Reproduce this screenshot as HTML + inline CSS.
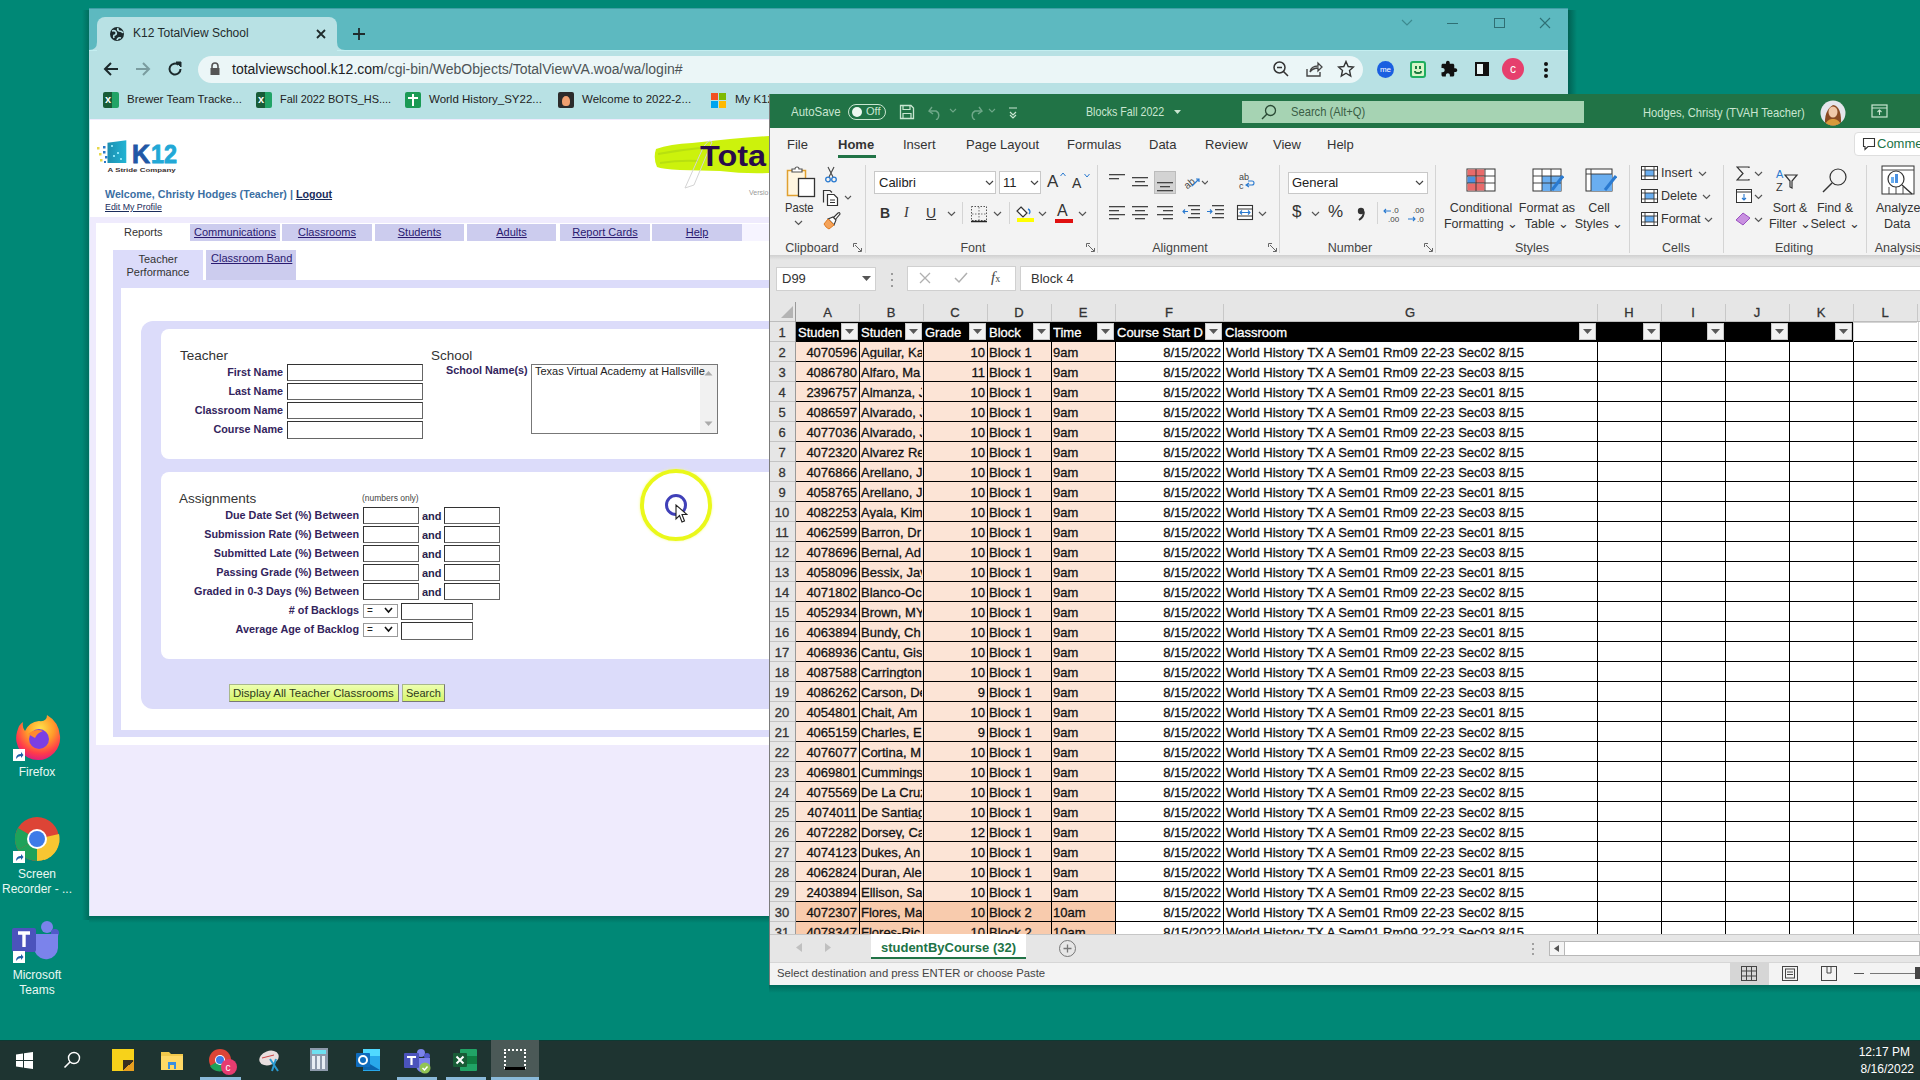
<!DOCTYPE html>
<html><head><meta charset="utf-8">
<style>
*{box-sizing:border-box;margin:0;padding:0}
html,body{width:1920px;height:1080px;overflow:hidden}
body{background:#008876;font-family:"Liberation Sans",sans-serif;position:relative}
.a{position:absolute}
.t{position:absolute;white-space:nowrap;line-height:1}
.g .t{-webkit-text-stroke:0.3px currentColor}
.lbl{font-size:10.8px;font-weight:bold;color:#33245c;text-align:right}
.inp{position:absolute;background:#fff;border:1px solid #666;border-top-color:#333;border-left-color:#333}
.navtab{position:absolute;height:17px;background:#ccccee;font-size:11px;color:#2a1a70;text-decoration:underline;text-align:center;line-height:17px}
.xl{width:16px;height:16px;background:linear-gradient(90deg,#185c37 0 55%,#21a366 55%);border-radius:2px}
.xl::after{content:"x";position:absolute;left:2px;top:1px;font:bold 11px "Liberation Sans";color:#fff}
</style></head><body>
<!-- desktop icons -->
<svg class="a" style="left:13px;top:712px" width="50" height="50" viewBox="0 0 50 50">
<defs><radialGradient id="ffg" cx="55%" cy="30%" r="70%"><stop offset="0" stop-color="#ffe14a"/><stop offset=".45" stop-color="#ff9a2a"/><stop offset=".8" stop-color="#ff3b4a"/><stop offset="1" stop-color="#e0207a"/></radialGradient></defs>
<path d="M25 48A22 22 0 0 1 4 20Q6 12 10 10Q9 16 12 19Q16 10 26 9Q34 10 34 3Q46 10 47 24A22 22 0 0 1 25 48Z" fill="url(#ffg)"/>
<circle cx="26" cy="27" r="10" fill="#7b3fe4"/><path d="M15 22Q22 16 30 19Q24 21 22 26Z" fill="#ff8a30"/>
</svg>
<div class="a" style="left:13px;top:749px;width:12px;height:12px;background:#fff"><svg class="a" style="left:1px;top:1px" width="10" height="10"><path d="M2 9Q2 4 7 4V2L9.5 5L7 8V6Q4 6 2 9Z" fill="#1b5fa8"/></svg></div>
<div class="t" style="left:0;width:74px;top:766px;text-align:center;font-size:12px;color:#eaf8f4">Firefox</div>

<svg class="a" style="left:14px;top:816px" width="46" height="46" viewBox="0 0 46 46">
<circle cx="23" cy="23" r="22" fill="#dd4436"/>
<path d="M23 23L4 34A22 22 0 0 1 4 12Z" fill="#1ea25a"/><path d="M23 23L4 34A22 22 0 0 0 32 43Z" fill="#1ea25a"/>
<path d="M23 23L45 23A22 22 0 0 1 23 45Z" fill="#f8c632"/><path d="M23 23L45 18A22 22 0 0 1 30 44Z" fill="#f8c632"/>
<circle cx="23" cy="23" r="10" fill="#fff"/><circle cx="23" cy="23" r="8" fill="#3d7be8"/>
</svg>
<div class="a" style="left:13px;top:851px;width:12px;height:12px;background:#fff"><svg class="a" style="left:1px;top:1px" width="10" height="10"><path d="M2 9Q2 4 7 4V2L9.5 5L7 8V6Q4 6 2 9Z" fill="#1b5fa8"/></svg></div>
<div class="t" style="left:0;width:74px;top:867px;text-align:center;font-size:12px;color:#eaf8f4;line-height:15px">Screen<br>Recorder - ...</div>

<svg class="a" style="left:11px;top:918px" width="50" height="44" viewBox="0 0 50 44">
<circle cx="36" cy="9" r="6" fill="#7b83eb"/><circle cx="44" cy="15" r="4" fill="#5059c9"/>
<path d="M18 16H47V30A12 12 0 0 1 24 34Z" fill="#7b83eb"/>
<rect x="1" y="10" width="24" height="24" rx="2" fill="#4b53bc"/>
<path d="M7 15H19M13 15V29" stroke="#fff" stroke-width="3.4"/>
</svg>
<div class="a" style="left:13px;top:951px;width:12px;height:12px;background:#fff"><svg class="a" style="left:1px;top:1px" width="10" height="10"><path d="M2 9Q2 4 7 4V2L9.5 5L7 8V6Q4 6 2 9Z" fill="#1b5fa8"/></svg></div>
<div class="t" style="left:0;width:74px;top:968px;text-align:center;font-size:12px;color:#eaf8f4;line-height:15px">Microsoft<br>Teams</div>

<!-- CHROME WINDOW -->
<div class="a" style="left:82px;top:10px;width:7px;height:910px;background:linear-gradient(270deg,rgba(0,50,40,.3),rgba(0,60,50,0))"></div>
<div class="a" style="left:1568px;top:10px;width:9px;height:910px;background:linear-gradient(90deg,rgba(0,50,40,.45),rgba(0,60,50,0))"></div>
<div class="a" style="left:89px;top:916px;width:680px;height:7px;background:linear-gradient(180deg,rgba(0,50,40,.35),rgba(0,60,50,0))"></div>
<div class="a" style="left:89px;top:8px;width:1479px;height:42px;background:#5db9c0"></div>
<div class="a" style="left:89px;top:8px;width:1479px;height:1px;background:#3f9ea5"></div>
<div class="a" style="left:97px;top:17px;width:240px;height:34px;background:#b8e1e4;border-radius:8px 8px 0 0"></div>
<svg class="a" style="left:89px;top:42px" width="8" height="8"><path d="M0 8H8V0Q8 8 0 8Z" fill="#b8e1e4"/></svg>
<svg class="a" style="left:337px;top:42px" width="8" height="8"><path d="M0 0V8H8Q0 8 0 0Z" fill="#b8e1e4"/></svg>
<!-- globe -->
<svg class="a" style="left:109px;top:26px" width="16" height="16" viewBox="0 0 16 16"><circle cx="8" cy="8" r="7" fill="#1c2a2c"/><path d="M3 5 q3 -1 4 1 q1 2 -1 3 q-2 0 -1 3 M9 2 q-1 2 1 3 q3 0 4 2 M8 14 q1-3 4-2" stroke="#b8e1e4" stroke-width="1.6" fill="none"/></svg>
<div class="t" style="left:133px;top:27px;font-size:12px;color:#1f2b2c">K12 TotalView School</div>
<svg class="a" style="left:315px;top:28px" width="12" height="12" viewBox="0 0 12 12"><path d="M2 2L10 10M10 2L2 10" stroke="#1f2b2c" stroke-width="1.8"/></svg>
<svg class="a" style="left:352px;top:27px" width="14" height="14" viewBox="0 0 14 14"><path d="M7 1V13M1 7H13" stroke="#1f2b2c" stroke-width="1.8"/></svg>
<!-- window controls -->
<svg class="a" style="left:1400px;top:17px" width="14" height="12" viewBox="0 0 14 12"><path d="M2 3L7 8L12 3" stroke="#3d8a8f" stroke-width="1.2" fill="none"/></svg>
<div class="a" style="left:1447px;top:23px;width:11px;height:1px;background:#2f6f74"></div>
<div class="a" style="left:1494px;top:18px;width:11px;height:10px;border:1px solid #2f6f74"></div>
<svg class="a" style="left:1539px;top:17px" width="12" height="12" viewBox="0 0 12 12"><path d="M1 1L11 11M11 1L1 11" stroke="#2f6f74" stroke-width="1.1"/></svg>
<!-- toolbar -->
<div class="a" style="left:89px;top:50px;width:1479px;height:69px;background:#b8e1e4;border-top:1px solid #c4eef0"></div>
<div class="a" style="left:97px;top:49px;width:240px;height:3px;background:#b8e1e4"></div>
<svg class="a" style="left:102px;top:61px" width="18" height="16" viewBox="0 0 18 16"><path d="M16 8H3M9 2L3 8L9 14" stroke="#1c2a2c" stroke-width="2" fill="none"/></svg>
<svg class="a" style="left:134px;top:61px" width="18" height="16" viewBox="0 0 18 16"><path d="M2 8H15M9 2L15 8L9 14" stroke="#7a9c9f" stroke-width="2" fill="none"/></svg>
<svg class="a" style="left:166px;top:60px" width="18" height="18" viewBox="0 0 18 18"><path d="M14.5 9A5.5 5.5 0 1 1 12.5 4.8" stroke="#1c2a2c" stroke-width="2" fill="none"/><path d="M10 2H15V7Z" fill="#1c2a2c" stroke="#1c2a2c" stroke-width="1"/></svg>
<div class="a" style="left:198px;top:56px;width:1165px;height:27px;background:#ebf6f7;border-radius:14px"></div>
<svg class="a" style="left:209px;top:62px" width="12" height="14" viewBox="0 0 12 14"><path d="M3 6V4a3 3 0 0 1 6 0V6" stroke="#555" stroke-width="1.6" fill="none"/><rect x="1.5" y="6" width="9" height="7" fill="#555"/></svg>
<div class="t" style="left:232px;top:62px;font-size:14px;color:#202124">totalviewschool.k12.com<span style="color:#4d5456">/cgi-bin/WebObjects/TotalViewVA.woa/wa/login#</span></div>
<svg class="a" style="left:1272px;top:60px" width="18" height="18" viewBox="0 0 18 18"><circle cx="7.5" cy="7.5" r="5.5" stroke="#333" stroke-width="1.5" fill="none"/><path d="M5 7.5H10M11.5 11.5L16 16" stroke="#333" stroke-width="1.5"/></svg>
<svg class="a" style="left:1305px;top:60px" width="18" height="18" viewBox="0 0 18 18"><path d="M2 9V16H15V12" stroke="#444" stroke-width="1.4" fill="none"/><path d="M5 12q1-6 8-6V3l4 4-4 4V8q-5 0-8 4" stroke="#444" stroke-width="1.3" fill="none"/></svg>
<svg class="a" style="left:1337px;top:60px" width="18" height="18" viewBox="0 0 18 18"><path d="M9 1.5L11.2 6.5L16.5 7L12.5 10.5L13.7 16L9 13.2L4.3 16L5.5 10.5L1.5 7L6.8 6.5Z" stroke="#333" stroke-width="1.4" fill="none"/></svg>
<div class="a" style="left:1377px;top:61px;width:17px;height:17px;border-radius:50%;background:#1a5fe0;color:#fff;font-size:8px;line-height:17px;text-align:center">me</div>
<div class="a" style="left:1410px;top:61px;width:16px;height:17px;border:2px solid #1fae5f;border-radius:3px;background:#d8f5c8"><div class="a" style="left:3px;top:3px;width:2px;height:3px;background:#1b7a40"></div><div class="a" style="left:7px;top:3px;width:2px;height:3px;background:#1b7a40"></div><div class="a" style="left:2px;top:8px;width:8px;height:3px;border:2px solid #1b7a40;border-top:none;border-radius:0 0 4px 4px"></div></div>
<svg class="a" style="left:1440px;top:60px" width="18" height="18" viewBox="0 0 24 24"><path d="M20.5 11H19V7c0-1.1-.9-2-2-2h-4V3.5C13 2.12 11.88 1 10.5 1S8 2.12 8 3.5V5H4c-1.1 0-1.99.9-1.99 2v3.8H3.5c1.49 0 2.7 1.21 2.7 2.7s-1.21 2.7-2.7 2.7H2V20c0 1.1.9 2 2 2h3.8v-1.5c0-1.49 1.21-2.7 2.7-2.7 1.49 0 2.7 1.21 2.7 2.7V22H17c1.1 0 2-.9 2-2v-4h1.5c1.380 0 2.5-1.12 2.5-2.5S21.88 11 20.5 11z" fill="#111"/></svg>
<div class="a" style="left:1475px;top:62px;width:14px;height:14px;border:2px solid #111;background:linear-gradient(90deg,#e8f4f4 0 55%,#111 55%)"></div>
<div class="a" style="left:1502px;top:58px;width:22px;height:22px;border-radius:50%;background:#e63f6d;color:#fff;font-size:12px;line-height:22px;text-align:center">c</div>
<div class="a" style="left:1544px;top:62px;width:4px;height:4px;border-radius:50%;background:#111"></div>
<div class="a" style="left:1544px;top:68px;width:4px;height:4px;border-radius:50%;background:#111"></div>
<div class="a" style="left:1544px;top:74px;width:4px;height:4px;border-radius:50%;background:#111"></div>
<!-- bookmarks -->
<div class="a xl" style="left:103px;top:92px"></div>
<div class="t" style="left:127px;top:94px;font-size:11.5px;color:#222">Brewer Team Tracke...</div>
<div class="a xl" style="left:256px;top:92px"></div>
<div class="t" style="left:280px;top:94px;font-size:11.5px;color:#222;transform:scaleX(0.95);transform-origin:0 0">Fall 2022 BOTS_HS....</div>
<div class="a" style="left:405px;top:92px;width:16px;height:16px;background:#1a9a55;border-radius:2px"><div class="a" style="left:7px;top:2px;width:2px;height:12px;background:#fff"></div><div class="a" style="left:3px;top:5px;width:10px;height:2px;background:#fff"></div></div>
<div class="t" style="left:429px;top:94px;font-size:11.5px;color:#222">World History_SY22...</div>
<div class="a" style="left:558px;top:92px;width:16px;height:16px;background:#2b2b2b;border-radius:2px"><div class="a" style="left:4px;top:4px;width:8px;height:10px;background:#f0a070;border-radius:50% 50% 40% 40%"></div></div>
<div class="t" style="left:582px;top:94px;font-size:11.5px;color:#222">Welcome to 2022-2...</div>
<div class="a" style="left:711px;top:93px;width:7px;height:7px;background:#f25022"></div><div class="a" style="left:719px;top:93px;width:7px;height:7px;background:#7fba00"></div><div class="a" style="left:711px;top:101px;width:7px;height:7px;background:#00a4ef"></div><div class="a" style="left:719px;top:101px;width:7px;height:7px;background:#ffb900"></div>
<div class="t" style="left:735px;top:94px;font-size:11.5px;color:#222">My K12</div>

<!-- WEB PAGE -->
<div class="a" style="left:89px;top:119px;width:1479px;height:797px;background:#efebfd;border-left:1px solid #bfeaee"></div>
<div class="a" style="left:90px;top:120px;width:1478px;height:97px;background:#fff"></div>
<div class="a" style="left:96px;top:223px;width:1472px;height:522px;background:#fff"></div>

<!-- K12 logo -->
<svg class="a" style="left:96px;top:137px" width="84" height="38" viewBox="0 0 84 38">
<defs><linearGradient id="k12b" x1="0" x2="1"><stop offset="0" stop-color="#1c8fb0"/><stop offset="1" stop-color="#22b4d4"/></linearGradient></defs>
<g fill="#e8d84a"><rect x="1" y="10" width="2.5" height="2.5"/><rect x="3" y="16" width="2.5" height="2.5"/><rect x="4" y="22" width="2.5" height="2.5"/></g>
<g fill="#2a7ac8"><rect x="7" y="9" width="2.5" height="2.5"/><rect x="7" y="14" width="2.5" height="2.5"/><rect x="9" y="19" width="2.5" height="2.5"/><rect x="8" y="24" width="2" height="2"/></g>
<path d="M11.5 5.8L30.3 3.2V26H11.5Z" fill="url(#k12b)"/>
<g fill="#9ff0ff" opacity=".85"><rect x="15" y="8" width="2" height="2"/><rect x="21" y="15" width="2" height="2"/><rect x="17" y="18" width="2" height="2"/><rect x="24" y="21" width="2" height="2"/></g>
<text x="36" y="26" font-family="Liberation Sans" font-weight="bold" font-size="26.5" fill="#1f58a6" stroke="#1f58a6" stroke-width="0.9" textLength="18" lengthAdjust="spacingAndGlyphs">K</text>
<text x="55" y="26" font-family="Liberation Sans" font-weight="bold" font-size="26.5" fill="#22a8d6" stroke="#22a8d6" stroke-width="0.9" textLength="26" lengthAdjust="spacingAndGlyphs">12</text>
<text x="11.6" y="34.5" font-family="Liberation Sans" font-weight="bold" font-size="6" fill="#3a2e2e" textLength="68" lengthAdjust="spacingAndGlyphs">A Stride Company</text>
</svg>
<div class="t" style="left:105px;top:189px;font-size:10.7px;font-weight:bold;color:#3b6fa3">Welcome, Christy Hodges (Teacher) | <span style="color:#1b2d5c;text-decoration:underline">Logout</span></div>
<div class="t" style="left:105px;top:202px;font-size:9.8px;color:#1b2d5c;text-decoration:underline;transform:scaleX(0.9);transform-origin:0 0">Edit My Profile</div>
<!-- TotalView logo -->
<svg class="a" style="left:650px;top:130px" width="120" height="70" viewBox="0 0 120 70">
<path d="M6 19 Q20 14 42 13 L80 9 Q100 7 119 6 L119 43 Q95 44 70 41 L30 40 Q12 39 7 37 Q3 28 6 19Z" fill="#ccf20c"/>
<path d="M8 24Q30 20 50 18M10 33Q30 30 48 31" stroke="#b8e010" stroke-width="2" fill="none"/>
<path d="M35 58 L52 20 Q58 8 62 12 L44 55 Z" stroke="#d4d4d4" stroke-width="1" fill="none"/>
<text x="50" y="36" font-family="Liberation Sans" font-weight="bold" font-size="29" fill="#2a0b4a" textLength="66" lengthAdjust="spacingAndGlyphs">Tota</text>
<text x="99" y="65" font-family="Liberation Sans" font-size="7" fill="#999">Versio</text>
</svg>
<!-- nav tabs -->
<div class="t" style="left:124px;top:227px;font-size:11px;color:#333">Reports</div>
<div class="navtab" style="left:190px;width:90px;top:224px">Communications</div>
<div class="navtab" style="left:282px;width:90px;top:224px">Classrooms</div>
<div class="navtab" style="left:375px;width:89px;top:224px">Students</div>
<div class="navtab" style="left:467px;width:89px;top:224px">Adults</div>
<div class="navtab" style="left:560px;width:90px;top:224px">Report Cards</div>
<div class="navtab" style="left:652px;width:90px;top:224px">Help</div>
<div class="a" style="left:742px;top:224px;width:30px;height:17px;background:#f6f4ff"></div>
<!-- sub tabs -->
<div class="a" style="left:113px;top:250px;width:90px;height:31px;background:#dcdcfa"></div>
<div class="t" style="left:113px;width:90px;top:253px;font-size:11px;color:#333;text-align:center;line-height:13px">Teacher<br>Performance</div>
<div class="a" style="left:206px;top:250px;width:90px;height:31px;background:#ccccee"></div>
<div class="t" style="left:211px;top:253px;font-size:11px;color:#2a1a70;text-decoration:underline">Classroom Band</div>
<!-- frame -->
<div class="a" style="left:113px;top:280px;width:1455px;height:457px;background:#dcdcfa"></div>
<div class="a" style="left:121px;top:288px;width:1447px;height:442px;background:#fff"></div>
<div class="a" style="left:141px;top:321px;width:1427px;height:388px;background:#dcdcfa;border-radius:12px 0 0 12px"></div>
<div class="a" style="left:161px;top:329px;width:1407px;height:130px;background:#fff;border-radius:8px 0 0 8px"></div>
<div class="a" style="left:161px;top:472px;width:1407px;height:187px;background:#fff;border-radius:8px 0 0 8px"></div>
<!-- teacher panel -->
<div class="t" style="left:180px;top:349px;font-size:13.5px;color:#333">Teacher</div>
<div class="t lbl" style="left:120px;width:163px;top:367px">First Name</div>
<div class="t lbl" style="left:120px;width:163px;top:386px">Last Name</div>
<div class="t lbl" style="left:120px;width:163px;top:405px">Classroom Name</div>
<div class="t lbl" style="left:120px;width:163px;top:424px">Course Name</div>
<div class="inp" style="left:287px;top:364px;width:136px;height:17px"></div>
<div class="inp" style="left:287px;top:383px;width:136px;height:17px"></div>
<div class="inp" style="left:287px;top:402px;width:136px;height:17px"></div>
<div class="inp" style="left:287px;top:421px;width:136px;height:18px"></div>
<div class="t" style="left:431px;top:349px;font-size:13.5px;color:#333">School</div>
<div class="t lbl" style="left:446px;top:365px">School Name(s)</div>
<div class="inp" style="left:531px;top:364px;width:187px;height:70px;border-color:#777"></div>
<div class="a" style="left:700px;top:365px;width:17px;height:68px;background:#f1f1f1"></div>
<svg class="a" style="left:704px;top:370px" width="9" height="6"><path d="M0.5 5.5L4.5 1L8.5 5.5Z" fill="#aaa"/></svg>
<svg class="a" style="left:704px;top:421px" width="9" height="6"><path d="M0.5 0.5L4.5 5L8.5 0.5Z" fill="#aaa"/></svg>
<div class="t" style="left:535px;top:366px;font-size:11px;color:#222">Texas Virtual Academy at Hallsville</div>
<!-- assignments -->
<div class="t" style="left:179px;top:492px;font-size:13.5px;color:#333">Assignments</div>
<div class="t" style="left:362px;top:494px;font-size:8.5px;color:#444">(numbers only)</div>
<div class="t lbl" style="left:100px;width:259px;top:510px">Due Date Set (%) Between</div>
<div class="t lbl" style="left:100px;width:259px;top:529px">Submission Rate (%) Between</div>
<div class="t lbl" style="left:100px;width:259px;top:548px">Submitted Late (%) Between</div>
<div class="t lbl" style="left:100px;width:259px;top:567px">Passing Grade (%) Between</div>
<div class="t lbl" style="left:100px;width:259px;top:586px">Graded in 0-3 Days (%) Between</div>
<div class="t lbl" style="left:100px;width:259px;top:605px">&#35; of Backlogs</div>
<div class="t lbl" style="left:100px;width:259px;top:624px">Average Age of Backlog</div>
<div class="inp" style="left:363px;top:507px;width:56px;height:17px"></div>
<div class="inp" style="left:363px;top:526px;width:56px;height:17px"></div>
<div class="inp" style="left:363px;top:545px;width:56px;height:17px"></div>
<div class="inp" style="left:363px;top:564px;width:56px;height:17px"></div>
<div class="inp" style="left:363px;top:583px;width:56px;height:17px"></div>
<div class="inp" style="left:444px;top:507px;width:56px;height:17px"></div>
<div class="inp" style="left:444px;top:526px;width:56px;height:17px"></div>
<div class="inp" style="left:444px;top:545px;width:56px;height:17px"></div>
<div class="inp" style="left:444px;top:564px;width:56px;height:17px"></div>
<div class="inp" style="left:444px;top:583px;width:56px;height:17px"></div>
<div class="t" style="left:422px;top:511px;font-size:11px;font-weight:bold;color:#2b1f4d">and</div>
<div class="t" style="left:422px;top:530px;font-size:11px;font-weight:bold;color:#2b1f4d">and</div>
<div class="t" style="left:422px;top:549px;font-size:11px;font-weight:bold;color:#2b1f4d">and</div>
<div class="t" style="left:422px;top:568px;font-size:11px;font-weight:bold;color:#2b1f4d">and</div>
<div class="t" style="left:422px;top:587px;font-size:11px;font-weight:bold;color:#2b1f4d">and</div>
<div class="inp" style="left:363px;top:604px;width:35px;height:14px;border-color:#999"></div>
<div class="inp" style="left:363px;top:623px;width:35px;height:14px;border-color:#999"></div>
<div class="t" style="left:367px;top:606px;font-size:10px;color:#222">=</div>
<div class="t" style="left:367px;top:625px;font-size:10px;color:#222">=</div>
<svg class="a" style="left:384px;top:607px" width="9" height="7"><path d="M1 1L4.5 5L8 1" stroke="#111" stroke-width="1.6" fill="none"/></svg>
<svg class="a" style="left:384px;top:626px" width="9" height="7"><path d="M1 1L4.5 5L8 1" stroke="#111" stroke-width="1.6" fill="none"/></svg>
<div class="inp" style="left:401px;top:603px;width:72px;height:17px"></div>
<div class="inp" style="left:401px;top:622px;width:72px;height:18px"></div>
<!-- buttons -->
<div class="a" style="left:229px;top:684px;width:170px;height:18px;background:linear-gradient(#edffb0,#d6f56a);border:1px solid #a8b88a;border-right-color:#777;border-bottom-color:#777"></div>
<div class="t" style="left:233px;top:688px;font-size:11.5px;color:#2d3a1a">Display All Teacher Classrooms</div>
<div class="a" style="left:402px;top:684px;width:43px;height:18px;background:linear-gradient(#edffb0,#d6f56a);border:1px solid #a8b88a;border-right-color:#777;border-bottom-color:#777"></div>
<div class="t" style="left:406px;top:688px;font-size:11px;color:#2d3a1a">Search</div>
<!-- cursor highlight -->
<div class="a" style="left:640px;top:469px;width:72px;height:72px;border-radius:50%;border:4px solid #eaf81a;box-shadow:0 0 3px #f4fa90"></div>
<div class="a" style="left:665px;top:494px;width:22px;height:22px;border-radius:50%;border:3px solid #4040b8"></div>
<svg class="a" style="left:675px;top:504px" width="13" height="20" viewBox="0 0 13 20"><path d="M1 1V15L4.5 11.5L7 18L9.5 17L7 10.5H12Z" fill="#fff" stroke="#222" stroke-width="1.1"/></svg>

<div class="a" style="left:769px;top:94px;width:1151px;height:891px;overflow:hidden;background:#f3f3f3">
<div class="a" style="left:0px;top:0px;width:1151px;height:34px;background:#217346"></div>
<div class="t" style="left:22px;top:11px;font-size:13px;color:#c9e6d1;transform:scaleX(0.88);transform-origin:0 0">AutoSave</div>
<div class="a" style="left:79px;top:10px;width:38px;height:16px;border:1.5px solid #c9e6d1;border-radius:8px"></div>
<div class="a" style="left:83px;top:13px;width:10px;height:10px;background:#eef8f1;border-radius:50%"></div>
<div class="t" style="left:97px;top:12px;font-size:11px;color:#c9e6d1">Off</div>
<svg class="a" style="left:130px;top:10px" width="16" height="16" viewBox="0 0 16 16"><path d="M1.5 1.5H12L14.5 4V14.5H1.5Z" stroke="#c9e6d1" stroke-width="1.3" fill="none"/><path d="M4 1.5V5.5H11V1.5M4 14.5V9.5H12V14.5" stroke="#c9e6d1" stroke-width="1.2" fill="none"/></svg>
<svg class="a" style="left:158px;top:10px" width="18" height="16" viewBox="0 0 18 16"><path d="M5 3L2 7L6 10" stroke="#6fa889" stroke-width="1.4" fill="none"/><path d="M2.5 7H9a5 5 0 0 1 0 9" stroke="#6fa889" stroke-width="1.4" fill="none"/></svg>
<svg class="a" style="left:180px;top:14px" width="8" height="6" viewBox="0 0 8 6"><path d="M1 1L4 4L7 1" stroke="#6fa889" stroke-width="1.1" fill="none"/></svg>
<svg class="a" style="left:197px;top:10px" width="18" height="16" viewBox="0 0 18 16"><path d="M13 3L16 7L12 10" stroke="#6fa889" stroke-width="1.4" fill="none"/><path d="M15.5 7H9a5 5 0 0 0 0 9" stroke="#6fa889" stroke-width="1.4" fill="none"/></svg>
<svg class="a" style="left:219px;top:14px" width="8" height="6" viewBox="0 0 8 6"><path d="M1 1L4 4L7 1" stroke="#6fa889" stroke-width="1.1" fill="none"/></svg>
<svg class="a" style="left:238px;top:11px" width="12" height="14" viewBox="0 0 12 14"><path d="M2 3H10M3 7L6 10L9 7M3 10L6 13L9 10" stroke="#c9e6d1" stroke-width="1.2" fill="none"/></svg>
<div class="t" style="left:317px;top:11px;font-size:13px;color:#c9e6d1;transform:scaleX(0.82);transform-origin:0 0">Blocks Fall 2022</div>
<svg class="a" style="left:405px;top:16px" width="7" height="4" viewBox="0 0 7 4"><path d="M0 0H7L3.5 4Z" fill="#c9e6d1"/></svg>
<div class="a" style="left:473px;top:7px;width:342px;height:22px;background:#a6d3b3"></div>
<svg class="a" style="left:491px;top:9px" width="18" height="18" viewBox="0 0 18 18"><circle cx="10.5" cy="7.5" r="5" stroke="#2a4a35" stroke-width="1.3" fill="none"/><path d="M7 11L2 16" stroke="#2a4a35" stroke-width="1.5"/></svg>
<div class="t" style="left:522px;top:11px;font-size:13px;color:#3a5e45;transform:scaleX(0.86);transform-origin:0 0">Search (Alt+Q)</div>
<div class="t" style="left:874px;top:12px;font-size:13px;color:#c9e6d1;transform:scaleX(0.86);transform-origin:0 0">Hodges, Christy (TVAH Teacher)</div>
<svg class="a" style="left:1051px;top:6px" width="26" height="26" viewBox="0 0 26 26"><defs><clipPath id="avc"><circle cx="13" cy="13" r="12.5"/></clipPath></defs><g clip-path="url(#avc)"><rect width="26" height="26" fill="#e4e6ec"/><path d="M5 26Q4 10 13 5Q22 6 21 26Z" fill="#8a4a22"/><ellipse cx="13" cy="12" rx="4.5" ry="5.5" fill="#f0c8a8"/><path d="M4 26Q8 18 13 19Q18 18 22 26Z" fill="#d89a3a"/></g></svg>
<svg class="a" style="left:1102px;top:10px" width="17" height="14" viewBox="0 0 17 14"><rect x="1" y="1" width="15" height="12" stroke="#c9e6d1" stroke-width="1.2" fill="none"/><path d="M1 4H16M8.5 6V11M6.5 8L8.5 6L10.5 8" stroke="#c9e6d1" stroke-width="1.1" fill="none"/></svg>
<div class="a" style="left:0px;top:34px;width:1151px;height:127px;background:#f3f3f3"></div>
<div class="t" style="left:18px;top:44px;font-size:13px;color:#333">File</div>
<div class="t" style="left:69px;top:44px;font-size:13px;color:#333;font-weight:bold">Home</div>
<div class="t" style="left:134px;top:44px;font-size:13px;color:#333">Insert</div>
<div class="t" style="left:197px;top:44px;font-size:13px;color:#333">Page Layout</div>
<div class="t" style="left:298px;top:44px;font-size:13px;color:#333">Formulas</div>
<div class="t" style="left:380px;top:44px;font-size:13px;color:#333">Data</div>
<div class="t" style="left:436px;top:44px;font-size:13px;color:#333">Review</div>
<div class="t" style="left:504px;top:44px;font-size:13px;color:#333">View</div>
<div class="t" style="left:558px;top:44px;font-size:13px;color:#333">Help</div>
<div class="a" style="left:69px;top:61px;width:38px;height:3px;background:#217346"></div>
<div class="a" style="left:1085px;top:38px;width:70px;height:24px;background:#fff;border:1px solid #dedede;border-radius:4px"></div>
<svg class="a" style="left:1093px;top:43px" width="14" height="14" viewBox="0 0 14 14"><path d="M1.5 1.5H12.5V9.5H6L3 12.5V9.5H1.5Z" stroke="#333" stroke-width="1.1" fill="none"/></svg>
<div class="t" style="left:1108px;top:43px;font-size:13px;color:#217346">Comments</div>
<div class="a" style="left:96px;top:71px;width:1px;height:88px;background:#d4d4d4"></div>
<div class="a" style="left:328px;top:71px;width:1px;height:88px;background:#d4d4d4"></div>
<div class="a" style="left:510px;top:71px;width:1px;height:88px;background:#d4d4d4"></div>
<div class="a" style="left:666px;top:71px;width:1px;height:88px;background:#d4d4d4"></div>
<div class="a" style="left:860px;top:71px;width:1px;height:88px;background:#d4d4d4"></div>
<div class="a" style="left:954px;top:71px;width:1px;height:88px;background:#d4d4d4"></div>
<div class="a" style="left:1097px;top:71px;width:1px;height:88px;background:#d4d4d4"></div>
<div class="t" style="left:-17px;top:148px;width:120px;text-align:center;font-size:12.5px;color:#444">Clipboard</div>
<div class="t" style="left:144px;top:148px;width:120px;text-align:center;font-size:12.5px;color:#444">Font</div>
<div class="t" style="left:351px;top:148px;width:120px;text-align:center;font-size:12.5px;color:#444">Alignment</div>
<div class="t" style="left:521px;top:148px;width:120px;text-align:center;font-size:12.5px;color:#444">Number</div>
<div class="t" style="left:703px;top:148px;width:120px;text-align:center;font-size:12.5px;color:#444">Styles</div>
<div class="t" style="left:847px;top:148px;width:120px;text-align:center;font-size:12.5px;color:#444">Cells</div>
<div class="t" style="left:965px;top:148px;width:120px;text-align:center;font-size:12.5px;color:#444">Editing</div>
<div class="t" style="left:1069px;top:148px;width:120px;text-align:center;font-size:12.5px;color:#444">Analysis</div>
<svg class="a" style="left:84px;top:149px" width="9" height="9" viewBox="0 0 9 9"><path d="M0.5 0.5H4M0.5 0.5V4M8.5 5V8.5H5M2 2L8 8" stroke="#666" stroke-width="1" fill="none"/></svg>
<svg class="a" style="left:317px;top:149px" width="9" height="9" viewBox="0 0 9 9"><path d="M0.5 0.5H4M0.5 0.5V4M8.5 5V8.5H5M2 2L8 8" stroke="#666" stroke-width="1" fill="none"/></svg>
<svg class="a" style="left:499px;top:149px" width="9" height="9" viewBox="0 0 9 9"><path d="M0.5 0.5H4M0.5 0.5V4M8.5 5V8.5H5M2 2L8 8" stroke="#666" stroke-width="1" fill="none"/></svg>
<svg class="a" style="left:655px;top:149px" width="9" height="9" viewBox="0 0 9 9"><path d="M0.5 0.5H4M0.5 0.5V4M8.5 5V8.5H5M2 2L8 8" stroke="#666" stroke-width="1" fill="none"/></svg>
<svg class="a" style="left:17px;top:72px" width="30" height="32" viewBox="0 0 30 32"><rect x="1.5" y="4.5" width="18" height="25" fill="#fff6e0" stroke="#e0a030" stroke-width="1.5"/><path d="M6 6V3H9a2 2 0 0 1 4 0H16V6Z" fill="#fff" stroke="#555" stroke-width="1.2"/><rect x="12.5" y="12.5" width="16" height="18" fill="#fff" stroke="#333" stroke-width="1.3"/></svg>
<div class="t" style="left:16px;top:107px;font-size:13px;color:#333;transform:scaleX(0.86);transform-origin:0 0">Paste</div>
<svg class="a" style="left:25px;top:126px" width="9" height="6" viewBox="0 0 9 6"><path d="M1 1L4.5 4.5L8 1" stroke="#555" stroke-width="1.2" fill="none"/></svg>
<svg class="a" style="left:55px;top:72px" width="14" height="17" viewBox="0 0 14 17"><path d="M4 1L9 11M10 1L5 11" stroke="#444" stroke-width="1.1"/><circle cx="4" cy="13.5" r="2.3" stroke="#2a7ad0" stroke-width="1.3" fill="none"/><circle cx="10" cy="13.5" r="2.3" stroke="#2a7ad0" stroke-width="1.3" fill="none"/></svg>
<svg class="a" style="left:53px;top:95px" width="18" height="18" viewBox="0 0 18 18"><path d="M1.5 13.5V1.5H8L10 3.5" stroke="#333" stroke-width="1.2" fill="none"/><path d="M5.5 5.5H12L15.5 9V16.5H5.5Z" fill="#fff" stroke="#333" stroke-width="1.2"/><path d="M8 11H13M8 13.5H13" stroke="#333" stroke-width="1"/></svg>
<svg class="a" style="left:75px;top:101px" width="8" height="6" viewBox="0 0 8 6"><path d="M1 1L4 4L7 1" stroke="#555" stroke-width="1.1" fill="none"/></svg>
<svg class="a" style="left:53px;top:117px" width="19" height="19" viewBox="0 0 19 19"><path d="M11 7L16 2Q18 1 18 3L13 9Z" fill="#fff" stroke="#333" stroke-width="1.1"/><path d="M6 8L11 6L14 9L12 14Z" fill="#fff" stroke="#333" stroke-width="1.1"/><path d="M2 13L6 8L12 14L7 18Q4 17 2 13Z" fill="#f4a35a" stroke="#e07a20" stroke-width="1"/></svg>
<div class="a" style="left:105px;top:77px;width:122px;height:23px;background:#fff;border:1px solid #c8c8c8"></div>
<div class="t" style="left:110px;top:82px;font-size:13px;color:#222">Calibri</div>
<svg class="a" style="left:216px;top:86px" width="9" height="6" viewBox="0 0 9 6"><path d="M1 1L4.5 4.5L8 1" stroke="#444" stroke-width="1.2" fill="none"/></svg>
<div class="a" style="left:230px;top:77px;width:42px;height:23px;background:#fff;border:1px solid #c8c8c8"></div>
<div class="t" style="left:234px;top:82px;font-size:13px;color:#222">11</div>
<svg class="a" style="left:261px;top:86px" width="9" height="6" viewBox="0 0 9 6"><path d="M1 1L4.5 4.5L8 1" stroke="#444" stroke-width="1.2" fill="none"/></svg>
<div class="t" style="left:278px;top:79px;font-size:17px;color:#333">A</div>
<svg class="a" style="left:291px;top:78px" width="6" height="5" viewBox="0 0 6 5"><path d="M0.5 4L3 1L5.5 4" stroke="#2a7ad0" stroke-width="1" fill="none"/></svg>
<div class="t" style="left:303px;top:82px;font-size:14px;color:#333">A</div>
<svg class="a" style="left:315px;top:79px" width="6" height="5" viewBox="0 0 6 5"><path d="M0.5 1L3 4L5.5 1" stroke="#2a7ad0" stroke-width="1" fill="none"/></svg>
<div class="t" style="left:111px;top:112px;font-size:14px;font-weight:bold;color:#333">B</div>
<div class="t" style="left:135px;top:112px;font-size:14px;font-style:italic;color:#333;font-family:'Liberation Serif'">I</div>
<div class="t" style="left:157px;top:112px;font-size:14px;color:#333;text-decoration:underline">U</div>
<svg class="a" style="left:178px;top:117px" width="9" height="6" viewBox="0 0 9 6"><path d="M1 1L4.5 4.5L8 1" stroke="#555" stroke-width="1.2" fill="none"/></svg>
<svg class="a" style="left:224px;top:117px" width="9" height="6" viewBox="0 0 9 6"><path d="M1 1L4.5 4.5L8 1" stroke="#555" stroke-width="1.2" fill="none"/></svg>
<svg class="a" style="left:269px;top:117px" width="9" height="6" viewBox="0 0 9 6"><path d="M1 1L4.5 4.5L8 1" stroke="#555" stroke-width="1.2" fill="none"/></svg>
<svg class="a" style="left:309px;top:117px" width="9" height="6" viewBox="0 0 9 6"><path d="M1 1L4.5 4.5L8 1" stroke="#555" stroke-width="1.2" fill="none"/></svg>
<div class="a" style="left:193px;top:108px;width:1px;height:22px;background:#d4d4d4"></div>
<div class="a" style="left:240px;top:108px;width:1px;height:22px;background:#d4d4d4"></div>
<svg class="a" style="left:201px;top:111px" width="18" height="18" viewBox="0 0 18 18"><rect x="1.5" y="1.5" width="15" height="14" stroke="#555" stroke-width="1" stroke-dasharray="1.5 1.5" fill="none"/><path d="M9 2V16M2 9H16" stroke="#777" stroke-width="1" stroke-dasharray="1.5 1.5"/><path d="M1 16.5H17" stroke="#222" stroke-width="1.5"/></svg>
<svg class="a" style="left:247px;top:109px" width="20" height="20" viewBox="0 0 20 20"><path d="M5 4L11 10L7 14L1 8Z" fill="#fff" stroke="#333" stroke-width="1.2"/><path d="M12 6a3 3 0 0 1 1 5" stroke="#2a7ad0" stroke-width="1.4" fill="none"/><rect x="1" y="15" width="17" height="4" fill="#ffff00"/></svg>
<div class="t" style="left:288px;top:109px;font-size:16px;color:#333">A</div>
<div class="a" style="left:286px;top:125px;width:18px;height:4px;background:#e01010"></div>
<div class="a" style="left:385px;top:77px;width:22px;height:23px;background:#d3d3d3;border:1px solid #bcbcbc"></div>
<svg class="a" style="left:340px;top:80px" width="16" height="16" viewBox="0 0 16 16"><rect x="0" y="0" width="16" height="1.3" fill="#444"/><rect x="0" y="4" width="10" height="1.3" fill="#444"/></svg>
<svg class="a" style="left:363px;top:83px" width="16" height="16" viewBox="0 0 16 16"><rect x="0.0" y="0" width="16" height="1.3" fill="#444"/><rect x="3.0" y="4" width="10" height="1.3" fill="#444"/><rect x="0.0" y="8" width="16" height="1.3" fill="#444"/></svg>
<svg class="a" style="left:388px;top:88px" width="16" height="16" viewBox="0 0 16 16"><rect x="0.0" y="0" width="16" height="1.3" fill="#444"/><rect x="3.0" y="4" width="10" height="1.3" fill="#444"/><rect x="0.0" y="8" width="16" height="1.3" fill="#444"/></svg>
<svg class="a" style="left:413px;top:80px" width="26" height="16" viewBox="0 0 26 16"><text x="1" y="12" font-family="Liberation Sans" font-size="10" fill="#444" transform="rotate(-40 8 8)">ab</text><path d="M10 12L17 5M14 5H17V8" stroke="#2a7ad0" stroke-width="1.2" fill="none"/><path d="M20 7L23 10L26 7" stroke="#555" stroke-width="1.1" fill="none"/></svg>
<svg class="a" style="left:469px;top:78px" width="18" height="20" viewBox="0 0 18 20"><text x="1" y="8" font-family="Liberation Sans" font-size="9" fill="#444">ab</text><text x="1" y="17" font-family="Liberation Sans" font-size="9" fill="#444">c</text><path d="M8 13H14a2 2 0 0 0 0-4H10M11 11L8 13L11 15" stroke="#2a7ad0" stroke-width="1.1" fill="none"/></svg>
<svg class="a" style="left:340px;top:112px" width="16" height="16" viewBox="0 0 16 16"><rect x="0" y="0" width="16" height="1.3" fill="#444"/><rect x="0" y="4" width="10" height="1.3" fill="#444"/><rect x="0" y="8" width="16" height="1.3" fill="#444"/><rect x="0" y="12" width="10" height="1.3" fill="#444"/></svg>
<svg class="a" style="left:363px;top:112px" width="16" height="16" viewBox="0 0 16 16"><rect x="0.0" y="0" width="16" height="1.3" fill="#444"/><rect x="3.0" y="4" width="10" height="1.3" fill="#444"/><rect x="0.0" y="8" width="16" height="1.3" fill="#444"/><rect x="3.0" y="12" width="10" height="1.3" fill="#444"/></svg>
<svg class="a" style="left:388px;top:112px" width="16" height="16" viewBox="0 0 16 16"><rect x="0" y="0" width="16" height="1.3" fill="#444"/><rect x="6" y="4" width="10" height="1.3" fill="#444"/><rect x="0" y="8" width="16" height="1.3" fill="#444"/><rect x="6" y="12" width="10" height="1.3" fill="#444"/></svg>
<svg class="a" style="left:413px;top:111px" width="18" height="14" viewBox="0 0 18 14"><rect x="6" y="0" width="12" height="1.3" fill="#444"/><rect x="9" y="4" width="9" height="1.3" fill="#444"/><rect x="9" y="8" width="9" height="1.3" fill="#444"/><rect x="6" y="12" width="12" height="1.3" fill="#444"/><path d="M6 6.5H1M3 4.5L1 6.5L3 8.5" stroke="#2a7ad0" stroke-width="1.1" fill="none"/></svg>
<svg class="a" style="left:437px;top:111px" width="18" height="14" viewBox="0 0 18 14"><rect x="6" y="0" width="12" height="1.3" fill="#444"/><rect x="9" y="4" width="9" height="1.3" fill="#444"/><rect x="9" y="8" width="9" height="1.3" fill="#444"/><rect x="6" y="12" width="12" height="1.3" fill="#444"/><path d="M1 6.5H6M4 4.5L6 6.5L4 8.5" stroke="#2a7ad0" stroke-width="1.1" fill="none"/></svg>
<svg class="a" style="left:467px;top:110px" width="18" height="17" viewBox="0 0 18 17"><rect x="1.5" y="1.5" width="15" height="14" stroke="#333" stroke-width="1.1" fill="#fff"/><path d="M1.5 5H16.5M1.5 12H16.5" stroke="#333" stroke-width="1"/><path d="M4 8.5H14M6 6.5L4 8.5L6 10.5M12 6.5L14 8.5L12 10.5" stroke="#2a7ad0" stroke-width="1.1" fill="none"/></svg>
<svg class="a" style="left:489px;top:117px" width="9" height="6" viewBox="0 0 9 6"><path d="M1 1L4.5 4.5L8 1" stroke="#555" stroke-width="1.2" fill="none"/></svg>
<div class="a" style="left:519px;top:78px;width:140px;height:22px;background:#fff;border:1px solid #c8c8c8"></div>
<div class="t" style="left:523px;top:82px;font-size:13px;color:#222">General</div>
<svg class="a" style="left:646px;top:86px" width="9" height="6" viewBox="0 0 9 6"><path d="M1 1L4.5 4.5L8 1" stroke="#444" stroke-width="1.2" fill="none"/></svg>
<div class="t" style="left:523px;top:109px;font-size:17px;color:#333">$</div>
<svg class="a" style="left:542px;top:117px" width="9" height="6" viewBox="0 0 9 6"><path d="M1 1L4.5 4.5L8 1" stroke="#555" stroke-width="1.2" fill="none"/></svg>
<div class="t" style="left:559px;top:109px;font-size:17px;color:#333">%</div>
<svg class="a" style="left:587px;top:111px" width="10" height="16" viewBox="0 0 10 16"><circle cx="5" cy="6" r="3.2" fill="#333"/><path d="M7.8 6.5Q8 12 3 15" stroke="#333" stroke-width="2" fill="none"/></svg>
<div class="a" style="left:608px;top:108px;width:1px;height:22px;background:#d4d4d4"></div>
<svg class="a" style="left:614px;top:111px" width="20" height="18" viewBox="0 0 20 18"><text x="9" y="8" font-family="Liberation Sans" font-size="8" fill="#444">.0</text><text x="5" y="17" font-family="Liberation Sans" font-size="8" fill="#444">.00</text><path d="M1 6H8M3 4L1 6L3 8" stroke="#2a7ad0" stroke-width="1.1" fill="none"/></svg>
<svg class="a" style="left:638px;top:111px" width="20" height="18" viewBox="0 0 20 18"><text x="6" y="8" font-family="Liberation Sans" font-size="8" fill="#444">.00</text><text x="10" y="17" font-family="Liberation Sans" font-size="8" fill="#444">.0</text><path d="M1 14H8M6 12L8 14L6 16" stroke="#2a7ad0" stroke-width="1.1" fill="none"/></svg>
<svg class="a" style="left:697px;top:74px" width="30" height="24" viewBox="0 0 30 24"><rect x="1" y="1" width="28" height="22" fill="#fff" stroke="#333" stroke-width="1"/><rect x="1.5" y="1.5" width="17" height="6.5" fill="#e86a6a"/><rect x="1.5" y="8.5" width="8" height="6.5" fill="#4a90e0"/><rect x="9.5" y="8.5" width="9" height="6.5" fill="#e86a6a"/><rect x="1.5" y="15.5" width="17" height="7" fill="#e86a6a"/><path d="M10 1V23M19 1V23M1 8H29M1 15H29" stroke="#333" stroke-width="0.9"/></svg>
<div class="t" style="left:672px;top:108px;width:80px;text-align:center;font-size:12.5px;color:#333">Conditional</div>
<div class="t" style="left:672px;top:124px;width:80px;text-align:center;font-size:12.5px;color:#333">Formatting &#x2304;</div>
<svg class="a" style="left:763px;top:74px" width="32" height="30" viewBox="0 0 32 30"><rect x="1" y="1" width="28" height="22" fill="#fff" stroke="#333" stroke-width="1"/><rect x="10" y="8" width="19" height="15" fill="#6aaef0"/><path d="M10 1V23M19 1V23M1 8H29M1 15H29" stroke="#333" stroke-width="0.9"/><path d="M31 8L20 22" stroke="#2a7ad0" stroke-width="3"/></svg>
<div class="t" style="left:738px;top:108px;width:80px;text-align:center;font-size:12.5px;color:#333">Format as</div>
<div class="t" style="left:738px;top:124px;width:80px;text-align:center;font-size:12.5px;color:#333">Table &#x2304;</div>
<svg class="a" style="left:816px;top:74px" width="32" height="30" viewBox="0 0 32 30"><rect x="1" y="1" width="26" height="22" fill="#fff" stroke="#333" stroke-width="1"/><rect x="6" y="6" width="21" height="17" fill="#6aaef0"/><path d="M6 1V23M1 6H27" stroke="#333" stroke-width="0.9"/><path d="M31 8L20 22" stroke="#2a7ad0" stroke-width="3"/></svg>
<div class="t" style="left:790px;top:108px;width:80px;text-align:center;font-size:12.5px;color:#333">Cell</div>
<div class="t" style="left:790px;top:124px;width:80px;text-align:center;font-size:12.5px;color:#333">Styles &#x2304;</div>
<svg class="a" style="left:872px;top:72px" width="17" height="15" viewBox="0 0 17 15"><rect x="0.5" y="0.5" width="16" height="13" fill="#fff" stroke="#333" stroke-width="1"/><rect x="4" y="4" width="9" height="6" fill="#6aaef0"/><path d="M0.5 4H16.5M0.5 10H16.5M4 0.5V13.5M13 0.5V13.5" stroke="#333" stroke-width="0.9"/></svg>
<div class="t" style="left:892px;top:73px;font-size:12.5px;color:#333">Insert</div>
<svg class="a" style="left:872px;top:95px" width="17" height="15" viewBox="0 0 17 15"><rect x="0.5" y="0.5" width="16" height="13" fill="#fff" stroke="#333" stroke-width="1"/><rect x="4" y="4" width="9" height="6" fill="#6aaef0"/><path d="M0.5 4H16.5M0.5 10H16.5M4 0.5V13.5M13 0.5V13.5" stroke="#333" stroke-width="0.9"/></svg>
<div class="t" style="left:892px;top:96px;font-size:12.5px;color:#333">Delete</div>
<svg class="a" style="left:872px;top:118px" width="17" height="15" viewBox="0 0 17 15"><rect x="0.5" y="0.5" width="16" height="13" fill="#fff" stroke="#333" stroke-width="1"/><rect x="4" y="4" width="9" height="6" fill="#6aaef0"/><path d="M0.5 4H16.5M0.5 10H16.5M4 0.5V13.5M13 0.5V13.5" stroke="#333" stroke-width="0.9"/></svg>
<div class="t" style="left:892px;top:119px;font-size:12.5px;color:#333">Format</div>
<svg class="a" style="left:929px;top:77px" width="9" height="6" viewBox="0 0 9 6"><path d="M1 1L4.5 4.5L8 1" stroke="#555" stroke-width="1.2" fill="none"/></svg>
<svg class="a" style="left:933px;top:100px" width="9" height="6" viewBox="0 0 9 6"><path d="M1 1L4.5 4.5L8 1" stroke="#555" stroke-width="1.2" fill="none"/></svg>
<svg class="a" style="left:935px;top:123px" width="9" height="6" viewBox="0 0 9 6"><path d="M1 1L4.5 4.5L8 1" stroke="#555" stroke-width="1.2" fill="none"/></svg>
<svg class="a" style="left:967px;top:72px" width="14" height="15" viewBox="0 0 14 15"><path d="M13 2V1H1L7 7.5L1 14H13V13" stroke="#333" stroke-width="1.2" fill="none"/></svg>
<svg class="a" style="left:967px;top:95px" width="16" height="14" viewBox="0 0 16 14"><rect x="0.5" y="0.5" width="15" height="13" fill="#fff" stroke="#333" stroke-width="1"/><path d="M0.5 3H15.5" stroke="#333"/><path d="M8 5V11M6 9L8 11L10 9" stroke="#2a7ad0" stroke-width="1.1" fill="none"/></svg>
<svg class="a" style="left:966px;top:118px" width="16" height="14" viewBox="0 0 16 14"><path d="M1 8L8 1L15 6L8 13Z" fill="#c890e0" stroke="#9a50c0" stroke-width="1"/></svg>
<svg class="a" style="left:985px;top:77px" width="9" height="6" viewBox="0 0 9 6"><path d="M1 1L4.5 4.5L8 1" stroke="#555" stroke-width="1.2" fill="none"/></svg>
<svg class="a" style="left:985px;top:100px" width="9" height="6" viewBox="0 0 9 6"><path d="M1 1L4.5 4.5L8 1" stroke="#555" stroke-width="1.2" fill="none"/></svg>
<svg class="a" style="left:985px;top:123px" width="9" height="6" viewBox="0 0 9 6"><path d="M1 1L4.5 4.5L8 1" stroke="#555" stroke-width="1.2" fill="none"/></svg>
<svg class="a" style="left:1006px;top:72px" width="30" height="30" viewBox="0 0 30 30"><text x="1" y="12" font-family="Liberation Sans" font-size="11" fill="#2a7ad0">A</text><text x="1" y="25" font-family="Liberation Sans" font-size="11" fill="#333">Z</text><path d="M10 9H22L17 15V22L15 21V15Z" fill="none" stroke="#333" stroke-width="1.2"/></svg>
<div class="t" style="left:981px;top:108px;width:80px;text-align:center;font-size:12.5px;color:#333">Sort &amp;</div>
<div class="t" style="left:981px;top:124px;width:80px;text-align:center;font-size:12.5px;color:#333">Filter &#x2304;</div>
<svg class="a" style="left:1051px;top:72px" width="30" height="30" viewBox="0 0 30 30"><circle cx="18" cy="11" r="8" fill="none" stroke="#333" stroke-width="1.2"/><path d="M12 17L3 26" stroke="#333" stroke-width="1.4"/></svg>
<div class="t" style="left:1026px;top:108px;width:80px;text-align:center;font-size:12.5px;color:#333">Find &amp;</div>
<div class="t" style="left:1026px;top:124px;width:80px;text-align:center;font-size:12.5px;color:#333">Select &#x2304;</div>
<svg class="a" style="left:1112px;top:71px" width="36" height="32" viewBox="0 0 36 32"><rect x="1" y="1" width="32" height="28" fill="#fff" stroke="#333" stroke-width="1"/><path d="M1 5H33M8 22V29M15 22V29M22 22V29" stroke="#333" stroke-width="0.9"/><circle cx="15" cy="14" r="8" fill="#fff" stroke="#333" stroke-width="1.2"/><rect x="10" y="12" width="3" height="6" fill="#6aaef0"/><rect x="14" y="9" width="3" height="9" fill="#4a90e0"/><path d="M21 20L31 29" stroke="#333" stroke-width="1.4"/></svg>
<div class="t" style="left:1107px;top:108px;font-size:12.5px;color:#333">Analyze</div>
<div class="t" style="left:1115px;top:124px;font-size:12.5px;color:#333">Data</div>
<div class="a" style="left:0px;top:161px;width:1151px;height:47px;background:#e6e6e6"></div>
<div class="a" style="left:0px;top:161px;width:1151px;height:5px;background:linear-gradient(#d0d0d0,#e6e6e6)"></div>
<div class="a" style="left:7px;top:173px;width:100px;height:24px;background:#fff;border:1px solid #d0d0d0"></div>
<div class="t" style="left:13px;top:178px;font-size:13px;color:#333">D99</div>
<svg class="a" style="left:93px;top:182px" width="9" height="5" viewBox="0 0 9 5"><path d="M0 0H9L4.5 5Z" fill="#555"/></svg>
<div class="a" style="left:122px;top:179px;width:2px;height:2px;background:#9a9a9a"></div>
<div class="a" style="left:122px;top:185px;width:2px;height:2px;background:#9a9a9a"></div>
<div class="a" style="left:122px;top:191px;width:2px;height:2px;background:#9a9a9a"></div>
<div class="a" style="left:138px;top:172px;width:109px;height:25px;background:#fff;border:1px solid #d0d0d0"></div>
<svg class="a" style="left:150px;top:178px" width="12" height="12" viewBox="0 0 12 12"><path d="M1 1L11 11M11 1L1 11" stroke="#b0b0b0" stroke-width="1.3"/></svg>
<svg class="a" style="left:185px;top:178px" width="14" height="12" viewBox="0 0 14 12"><path d="M1 6L5 10L13 1" stroke="#b0b0b0" stroke-width="1.5" fill="none"/></svg>
<div class="t" style="left:222px;top:176px;font-size:15px;color:#444;font-family:'Liberation Serif'"><i>f</i><span style='font-size:10px'>x</span></div>
<div class="a" style="left:251px;top:172px;width:910px;height:25px;background:#fff;border:1px solid #d0d0d0"></div>
<div class="t" style="left:262px;top:178px;font-size:13px;color:#333">Block 4</div>
<div class="a" style="left:0px;top:840px;width:1151px;height:28px;background:#e6e6e6;border-top:1px solid #c6c6c6"></div>
<svg class="a" style="left:27px;top:849px" width="6" height="9" viewBox="0 0 6 9"><path d="M6 0V9L0 4.5Z" fill="#c0c0c0"/></svg>
<svg class="a" style="left:56px;top:849px" width="6" height="9" viewBox="0 0 6 9"><path d="M0 0V9L6 4.5Z" fill="#c0c0c0"/></svg>
<div class="a" style="left:102px;top:840px;width:155px;height:25px;background:#fff;border-bottom:2px solid #217346"></div>
<div class="t" style="left:102px;top:847px;width:155px;text-align:center;font-size:13px;font-weight:bold;color:#217346">studentByCourse (32)</div>
<div class="a" style="left:290px;top:846px;width:17px;height:17px;border:1.3px solid #777;border-radius:50%"></div>
<svg class="a" style="left:293px;top:849px" width="11" height="11" viewBox="0 0 11 11"><path d="M5.5 1.5V9.5M1.5 5.5H9.5" stroke="#777" stroke-width="1.3"/></svg>
<div class="a" style="left:763px;top:849px;width:2px;height:2px;background:#a0a0a0"></div>
<div class="a" style="left:763px;top:854px;width:2px;height:2px;background:#a0a0a0"></div>
<div class="a" style="left:763px;top:859px;width:2px;height:2px;background:#a0a0a0"></div>
<div class="a" style="left:780px;top:847px;width:371px;height:15px;background:#fff;border:1px solid #b8b8b8"></div>
<div class="a" style="left:780px;top:847px;width:16px;height:15px;background:#f4f4f4;border:1px solid #b8b8b8"></div>
<svg class="a" style="left:785px;top:851px" width="5" height="7" viewBox="0 0 5 7"><path d="M5 0V7L0 3.5Z" fill="#555"/></svg>
<div class="a" style="left:0px;top:868px;width:1151px;height:23px;background:#f3f3f3;border-top:1px solid #d6d6d6"></div>
<div class="t" style="left:8px;top:874px;font-size:11.3px;color:#444">Select destination and press ENTER or choose Paste</div>
<div class="a" style="left:961px;top:869px;width:39px;height:22px;background:#d6d6d6"></div>
<svg class="a" style="left:972px;top:872px" width="16" height="15" viewBox="0 0 16 15"><rect x="0.5" y="0.5" width="15" height="14" fill="none" stroke="#444"/><path d="M5.5 0.5V14.5M10.5 0.5V14.5M0.5 5H15.5M0.5 10H15.5" stroke="#444"/></svg>
<svg class="a" style="left:1013px;top:872px" width="16" height="15" viewBox="0 0 16 15"><rect x="0.5" y="0.5" width="15" height="14" fill="none" stroke="#444"/><rect x="3.5" y="3" width="9" height="9" fill="none" stroke="#444"/><path d="M5 6H11M5 8.5H11" stroke="#444"/></svg>
<svg class="a" style="left:1052px;top:872px" width="16" height="15" viewBox="0 0 16 15"><rect x="0.5" y="0.5" width="15" height="14" fill="none" stroke="#444"/><path d="M6 0.5V7H10V0.5" stroke="#444" fill="none"/></svg>
<div class="a" style="left:1085px;top:879px;width:10px;height:1px;background:#555"></div>
<div class="a" style="left:1101px;top:879px;width:50px;height:1px;background:#777"></div>
<div class="a" style="left:1146px;top:873px;width:5px;height:12px;background:#444"></div>
<div class="a g" style="left:0;top:208px;width:1151px;height:632px;overflow:hidden;background:#fff">
<div class="a" style="left:0px;top:0px;width:1151px;height:20px;background:#e6e6e6"></div>
<div class="a" style="left:0px;top:20px;width:27px;height:612px;background:#e6e6e6"></div>
<svg class="a" style="left:11px;top:3px" width="14" height="14"><path d="M13 1V13H1Z" fill="#b4b4b4"/></svg>
<div class="a" style="left:90px;top:2px;width:1px;height:18px;background:#c8c8c8"></div>
<div class="t" style="left:27px;top:4px;width:63px;text-align:center;font-size:13px;color:#333">A</div>
<div class="a" style="left:154px;top:2px;width:1px;height:18px;background:#c8c8c8"></div>
<div class="t" style="left:90px;top:4px;width:64px;text-align:center;font-size:13px;color:#333">B</div>
<div class="a" style="left:218px;top:2px;width:1px;height:18px;background:#c8c8c8"></div>
<div class="t" style="left:154px;top:4px;width:64px;text-align:center;font-size:13px;color:#333">C</div>
<div class="a" style="left:282px;top:2px;width:1px;height:18px;background:#c8c8c8"></div>
<div class="t" style="left:218px;top:4px;width:64px;text-align:center;font-size:13px;color:#333">D</div>
<div class="a" style="left:346px;top:2px;width:1px;height:18px;background:#c8c8c8"></div>
<div class="t" style="left:282px;top:4px;width:64px;text-align:center;font-size:13px;color:#333">E</div>
<div class="a" style="left:454px;top:2px;width:1px;height:18px;background:#c8c8c8"></div>
<div class="t" style="left:346px;top:4px;width:108px;text-align:center;font-size:13px;color:#333">F</div>
<div class="a" style="left:828px;top:2px;width:1px;height:18px;background:#c8c8c8"></div>
<div class="t" style="left:454px;top:4px;width:374px;text-align:center;font-size:13px;color:#333">G</div>
<div class="a" style="left:892px;top:2px;width:1px;height:18px;background:#c8c8c8"></div>
<div class="t" style="left:828px;top:4px;width:64px;text-align:center;font-size:13px;color:#333">H</div>
<div class="a" style="left:956px;top:2px;width:1px;height:18px;background:#c8c8c8"></div>
<div class="t" style="left:892px;top:4px;width:64px;text-align:center;font-size:13px;color:#333">I</div>
<div class="a" style="left:1020px;top:2px;width:1px;height:18px;background:#c8c8c8"></div>
<div class="t" style="left:956px;top:4px;width:64px;text-align:center;font-size:13px;color:#333">J</div>
<div class="a" style="left:1084px;top:2px;width:1px;height:18px;background:#c8c8c8"></div>
<div class="t" style="left:1020px;top:4px;width:64px;text-align:center;font-size:13px;color:#333">K</div>
<div class="a" style="left:1148px;top:2px;width:1px;height:18px;background:#c8c8c8"></div>
<div class="t" style="left:1084px;top:4px;width:64px;text-align:center;font-size:13px;color:#333">L</div>
<div class="a" style="left:26px;top:2px;width:1px;height:18px;background:#c8c8c8"></div>
<div class="a" style="left:0px;top:19px;width:1151px;height:1px;background:#bdbdbd"></div>
<div class="a" style="left:27px;top:40px;width:319px;height:20px;background:#fce4d6"></div>
<div class="a" style="left:27px;top:60px;width:319px;height:20px;background:#fce4d6"></div>
<div class="a" style="left:27px;top:80px;width:319px;height:20px;background:#fce4d6"></div>
<div class="a" style="left:27px;top:100px;width:319px;height:20px;background:#fce4d6"></div>
<div class="a" style="left:27px;top:120px;width:319px;height:20px;background:#fce4d6"></div>
<div class="a" style="left:27px;top:140px;width:319px;height:20px;background:#fce4d6"></div>
<div class="a" style="left:27px;top:160px;width:319px;height:20px;background:#fce4d6"></div>
<div class="a" style="left:27px;top:180px;width:319px;height:20px;background:#fce4d6"></div>
<div class="a" style="left:27px;top:200px;width:319px;height:20px;background:#fce4d6"></div>
<div class="a" style="left:27px;top:220px;width:319px;height:20px;background:#fce4d6"></div>
<div class="a" style="left:27px;top:240px;width:319px;height:20px;background:#fce4d6"></div>
<div class="a" style="left:27px;top:260px;width:319px;height:20px;background:#fce4d6"></div>
<div class="a" style="left:27px;top:280px;width:319px;height:20px;background:#fce4d6"></div>
<div class="a" style="left:27px;top:300px;width:319px;height:20px;background:#fce4d6"></div>
<div class="a" style="left:27px;top:320px;width:319px;height:20px;background:#fce4d6"></div>
<div class="a" style="left:27px;top:340px;width:319px;height:20px;background:#fce4d6"></div>
<div class="a" style="left:27px;top:360px;width:319px;height:20px;background:#fce4d6"></div>
<div class="a" style="left:27px;top:380px;width:319px;height:20px;background:#fce4d6"></div>
<div class="a" style="left:27px;top:400px;width:319px;height:20px;background:#fce4d6"></div>
<div class="a" style="left:27px;top:420px;width:319px;height:20px;background:#fce4d6"></div>
<div class="a" style="left:27px;top:440px;width:319px;height:20px;background:#fce4d6"></div>
<div class="a" style="left:27px;top:460px;width:319px;height:20px;background:#fce4d6"></div>
<div class="a" style="left:27px;top:480px;width:319px;height:20px;background:#fce4d6"></div>
<div class="a" style="left:27px;top:500px;width:319px;height:20px;background:#fce4d6"></div>
<div class="a" style="left:27px;top:520px;width:319px;height:20px;background:#fce4d6"></div>
<div class="a" style="left:27px;top:540px;width:319px;height:20px;background:#fce4d6"></div>
<div class="a" style="left:27px;top:560px;width:319px;height:20px;background:#fce4d6"></div>
<div class="a" style="left:27px;top:580px;width:319px;height:20px;background:#fce4d6"></div>
<div class="a" style="left:27px;top:600px;width:319px;height:20px;background:#f8cbad"></div>
<div class="a" style="left:27px;top:620px;width:319px;height:20px;background:#f8cbad"></div>
<div class="a" style="left:27px;top:20px;width:1057px;height:20px;background:#000"></div>
<div class="a" style="left:27px;top:20px;width:1057px;height:1px;background:#000"></div>
<div class="a" style="left:1084px;top:20px;width:64px;height:1px;background:#d4d4d4"></div>
<div class="a" style="left:27px;top:39px;width:1122px;height:1px;background:#000"></div>
<div class="a" style="left:27px;top:59px;width:1122px;height:1px;background:#000"></div>
<div class="a" style="left:27px;top:79px;width:1122px;height:1px;background:#000"></div>
<div class="a" style="left:27px;top:99px;width:1122px;height:1px;background:#000"></div>
<div class="a" style="left:27px;top:119px;width:1122px;height:1px;background:#000"></div>
<div class="a" style="left:27px;top:139px;width:1122px;height:1px;background:#000"></div>
<div class="a" style="left:27px;top:159px;width:1122px;height:1px;background:#000"></div>
<div class="a" style="left:27px;top:179px;width:1122px;height:1px;background:#000"></div>
<div class="a" style="left:27px;top:199px;width:1122px;height:1px;background:#000"></div>
<div class="a" style="left:27px;top:219px;width:1122px;height:1px;background:#000"></div>
<div class="a" style="left:27px;top:239px;width:1122px;height:1px;background:#000"></div>
<div class="a" style="left:27px;top:259px;width:1122px;height:1px;background:#000"></div>
<div class="a" style="left:27px;top:279px;width:1122px;height:1px;background:#000"></div>
<div class="a" style="left:27px;top:299px;width:1122px;height:1px;background:#000"></div>
<div class="a" style="left:27px;top:319px;width:1122px;height:1px;background:#000"></div>
<div class="a" style="left:27px;top:339px;width:1122px;height:1px;background:#000"></div>
<div class="a" style="left:27px;top:359px;width:1122px;height:1px;background:#000"></div>
<div class="a" style="left:27px;top:379px;width:1122px;height:1px;background:#000"></div>
<div class="a" style="left:27px;top:399px;width:1122px;height:1px;background:#000"></div>
<div class="a" style="left:27px;top:419px;width:1122px;height:1px;background:#000"></div>
<div class="a" style="left:27px;top:439px;width:1122px;height:1px;background:#000"></div>
<div class="a" style="left:27px;top:459px;width:1122px;height:1px;background:#000"></div>
<div class="a" style="left:27px;top:479px;width:1122px;height:1px;background:#000"></div>
<div class="a" style="left:27px;top:499px;width:1122px;height:1px;background:#000"></div>
<div class="a" style="left:27px;top:519px;width:1122px;height:1px;background:#000"></div>
<div class="a" style="left:27px;top:539px;width:1122px;height:1px;background:#000"></div>
<div class="a" style="left:27px;top:559px;width:1122px;height:1px;background:#000"></div>
<div class="a" style="left:27px;top:579px;width:1122px;height:1px;background:#000"></div>
<div class="a" style="left:27px;top:599px;width:1122px;height:1px;background:#000"></div>
<div class="a" style="left:27px;top:619px;width:1122px;height:1px;background:#000"></div>
<div class="a" style="left:27px;top:639px;width:1122px;height:1px;background:#000"></div>
<div class="a" style="left:90px;top:20px;width:1px;height:620px;background:#000"></div>
<div class="a" style="left:154px;top:20px;width:1px;height:620px;background:#000"></div>
<div class="a" style="left:218px;top:20px;width:1px;height:620px;background:#000"></div>
<div class="a" style="left:282px;top:20px;width:1px;height:620px;background:#000"></div>
<div class="a" style="left:346px;top:20px;width:1px;height:620px;background:#000"></div>
<div class="a" style="left:454px;top:20px;width:1px;height:620px;background:#000"></div>
<div class="a" style="left:828px;top:20px;width:1px;height:620px;background:#000"></div>
<div class="a" style="left:892px;top:20px;width:1px;height:620px;background:#000"></div>
<div class="a" style="left:956px;top:20px;width:1px;height:620px;background:#000"></div>
<div class="a" style="left:1020px;top:20px;width:1px;height:620px;background:#000"></div>
<div class="a" style="left:1084px;top:40px;width:1px;height:600px;background:#000"></div>
<div class="a" style="left:1084px;top:20px;width:1px;height:20px;background:#d4d4d4"></div>
<div class="a" style="left:1148px;top:40px;width:1px;height:600px;background:#000"></div>
<div class="a" style="left:1148px;top:20px;width:1px;height:20px;background:#d4d4d4"></div>
<div class="a" style="left:1148px;top:20px;width:3px;height:612px;background:#fff"></div>
<div class="a" style="left:1149px;top:20px;width:1px;height:612px;background:#d4d4d4"></div>
<div class="a" style="left:0px;top:39px;width:27px;height:1px;background:#c4c4c4"></div>
<div class="t" style="left:0px;top:24px;width:26px;text-align:center;font-size:13px;color:#333">1</div>
<div class="a" style="left:0px;top:59px;width:27px;height:1px;background:#c4c4c4"></div>
<div class="t" style="left:0px;top:44px;width:26px;text-align:center;font-size:13px;color:#333">2</div>
<div class="a" style="left:0px;top:79px;width:27px;height:1px;background:#c4c4c4"></div>
<div class="t" style="left:0px;top:64px;width:26px;text-align:center;font-size:13px;color:#333">3</div>
<div class="a" style="left:0px;top:99px;width:27px;height:1px;background:#c4c4c4"></div>
<div class="t" style="left:0px;top:84px;width:26px;text-align:center;font-size:13px;color:#333">4</div>
<div class="a" style="left:0px;top:119px;width:27px;height:1px;background:#c4c4c4"></div>
<div class="t" style="left:0px;top:104px;width:26px;text-align:center;font-size:13px;color:#333">5</div>
<div class="a" style="left:0px;top:139px;width:27px;height:1px;background:#c4c4c4"></div>
<div class="t" style="left:0px;top:124px;width:26px;text-align:center;font-size:13px;color:#333">6</div>
<div class="a" style="left:0px;top:159px;width:27px;height:1px;background:#c4c4c4"></div>
<div class="t" style="left:0px;top:144px;width:26px;text-align:center;font-size:13px;color:#333">7</div>
<div class="a" style="left:0px;top:179px;width:27px;height:1px;background:#c4c4c4"></div>
<div class="t" style="left:0px;top:164px;width:26px;text-align:center;font-size:13px;color:#333">8</div>
<div class="a" style="left:0px;top:199px;width:27px;height:1px;background:#c4c4c4"></div>
<div class="t" style="left:0px;top:184px;width:26px;text-align:center;font-size:13px;color:#333">9</div>
<div class="a" style="left:0px;top:219px;width:27px;height:1px;background:#c4c4c4"></div>
<div class="t" style="left:0px;top:204px;width:26px;text-align:center;font-size:13px;color:#333">10</div>
<div class="a" style="left:0px;top:239px;width:27px;height:1px;background:#c4c4c4"></div>
<div class="t" style="left:0px;top:224px;width:26px;text-align:center;font-size:13px;color:#333">11</div>
<div class="a" style="left:0px;top:259px;width:27px;height:1px;background:#c4c4c4"></div>
<div class="t" style="left:0px;top:244px;width:26px;text-align:center;font-size:13px;color:#333">12</div>
<div class="a" style="left:0px;top:279px;width:27px;height:1px;background:#c4c4c4"></div>
<div class="t" style="left:0px;top:264px;width:26px;text-align:center;font-size:13px;color:#333">13</div>
<div class="a" style="left:0px;top:299px;width:27px;height:1px;background:#c4c4c4"></div>
<div class="t" style="left:0px;top:284px;width:26px;text-align:center;font-size:13px;color:#333">14</div>
<div class="a" style="left:0px;top:319px;width:27px;height:1px;background:#c4c4c4"></div>
<div class="t" style="left:0px;top:304px;width:26px;text-align:center;font-size:13px;color:#333">15</div>
<div class="a" style="left:0px;top:339px;width:27px;height:1px;background:#c4c4c4"></div>
<div class="t" style="left:0px;top:324px;width:26px;text-align:center;font-size:13px;color:#333">16</div>
<div class="a" style="left:0px;top:359px;width:27px;height:1px;background:#c4c4c4"></div>
<div class="t" style="left:0px;top:344px;width:26px;text-align:center;font-size:13px;color:#333">17</div>
<div class="a" style="left:0px;top:379px;width:27px;height:1px;background:#c4c4c4"></div>
<div class="t" style="left:0px;top:364px;width:26px;text-align:center;font-size:13px;color:#333">18</div>
<div class="a" style="left:0px;top:399px;width:27px;height:1px;background:#c4c4c4"></div>
<div class="t" style="left:0px;top:384px;width:26px;text-align:center;font-size:13px;color:#333">19</div>
<div class="a" style="left:0px;top:419px;width:27px;height:1px;background:#c4c4c4"></div>
<div class="t" style="left:0px;top:404px;width:26px;text-align:center;font-size:13px;color:#333">20</div>
<div class="a" style="left:0px;top:439px;width:27px;height:1px;background:#c4c4c4"></div>
<div class="t" style="left:0px;top:424px;width:26px;text-align:center;font-size:13px;color:#333">21</div>
<div class="a" style="left:0px;top:459px;width:27px;height:1px;background:#c4c4c4"></div>
<div class="t" style="left:0px;top:444px;width:26px;text-align:center;font-size:13px;color:#333">22</div>
<div class="a" style="left:0px;top:479px;width:27px;height:1px;background:#c4c4c4"></div>
<div class="t" style="left:0px;top:464px;width:26px;text-align:center;font-size:13px;color:#333">23</div>
<div class="a" style="left:0px;top:499px;width:27px;height:1px;background:#c4c4c4"></div>
<div class="t" style="left:0px;top:484px;width:26px;text-align:center;font-size:13px;color:#333">24</div>
<div class="a" style="left:0px;top:519px;width:27px;height:1px;background:#c4c4c4"></div>
<div class="t" style="left:0px;top:504px;width:26px;text-align:center;font-size:13px;color:#333">25</div>
<div class="a" style="left:0px;top:539px;width:27px;height:1px;background:#c4c4c4"></div>
<div class="t" style="left:0px;top:524px;width:26px;text-align:center;font-size:13px;color:#333">26</div>
<div class="a" style="left:0px;top:559px;width:27px;height:1px;background:#c4c4c4"></div>
<div class="t" style="left:0px;top:544px;width:26px;text-align:center;font-size:13px;color:#333">27</div>
<div class="a" style="left:0px;top:579px;width:27px;height:1px;background:#c4c4c4"></div>
<div class="t" style="left:0px;top:564px;width:26px;text-align:center;font-size:13px;color:#333">28</div>
<div class="a" style="left:0px;top:599px;width:27px;height:1px;background:#c4c4c4"></div>
<div class="t" style="left:0px;top:584px;width:26px;text-align:center;font-size:13px;color:#333">29</div>
<div class="a" style="left:0px;top:619px;width:27px;height:1px;background:#c4c4c4"></div>
<div class="t" style="left:0px;top:604px;width:26px;text-align:center;font-size:13px;color:#333">30</div>
<div class="a" style="left:0px;top:639px;width:27px;height:1px;background:#c4c4c4"></div>
<div class="t" style="left:0px;top:624px;width:26px;text-align:center;font-size:13px;color:#333">31</div>
<div class="a" style="left:26px;top:0px;width:1px;height:632px;background:#9a9a9a"></div>
<div class="t" style="left:29px;top:24px;font-size:13px;color:#fff;width:44px;overflow:hidden">Studen</div>
<div class="a" style="left:72px;top:21px;width:17px;height:17px;background:#f2f2f2;border:1px solid #c9c9c9"></div>
<svg class="a" style="left:76px;top:27px" width="9" height="5"><path d="M0 0H9L4.5 5Z" fill="#595959"/></svg>
<div class="t" style="left:92px;top:24px;font-size:13px;color:#fff;width:45px;overflow:hidden">Studen</div>
<div class="a" style="left:136px;top:21px;width:17px;height:17px;background:#f2f2f2;border:1px solid #c9c9c9"></div>
<svg class="a" style="left:140px;top:27px" width="9" height="5"><path d="M0 0H9L4.5 5Z" fill="#595959"/></svg>
<div class="t" style="left:156px;top:24px;font-size:13px;color:#fff;width:45px;overflow:hidden">Grade</div>
<div class="a" style="left:200px;top:21px;width:17px;height:17px;background:#f2f2f2;border:1px solid #c9c9c9"></div>
<svg class="a" style="left:204px;top:27px" width="9" height="5"><path d="M0 0H9L4.5 5Z" fill="#595959"/></svg>
<div class="t" style="left:220px;top:24px;font-size:13px;color:#fff;width:45px;overflow:hidden">Block</div>
<div class="a" style="left:264px;top:21px;width:17px;height:17px;background:#f2f2f2;border:1px solid #c9c9c9"></div>
<svg class="a" style="left:268px;top:27px" width="9" height="5"><path d="M0 0H9L4.5 5Z" fill="#595959"/></svg>
<div class="t" style="left:284px;top:24px;font-size:13px;color:#fff;width:45px;overflow:hidden">Time</div>
<div class="a" style="left:328px;top:21px;width:17px;height:17px;background:#f2f2f2;border:1px solid #c9c9c9"></div>
<svg class="a" style="left:332px;top:27px" width="9" height="5"><path d="M0 0H9L4.5 5Z" fill="#595959"/></svg>
<div class="t" style="left:348px;top:24px;font-size:13px;color:#fff;width:89px;overflow:hidden">Course Start D</div>
<div class="a" style="left:436px;top:21px;width:17px;height:17px;background:#f2f2f2;border:1px solid #c9c9c9"></div>
<svg class="a" style="left:440px;top:27px" width="9" height="5"><path d="M0 0H9L4.5 5Z" fill="#595959"/></svg>
<div class="t" style="left:456px;top:24px;font-size:13px;color:#fff;width:355px;overflow:hidden">Classroom</div>
<div class="a" style="left:810px;top:21px;width:17px;height:17px;background:#f2f2f2;border:1px solid #c9c9c9"></div>
<svg class="a" style="left:814px;top:27px" width="9" height="5"><path d="M0 0H9L4.5 5Z" fill="#595959"/></svg>
<div class="a" style="left:874px;top:21px;width:17px;height:17px;background:#f2f2f2;border:1px solid #c9c9c9"></div>
<svg class="a" style="left:878px;top:27px" width="9" height="5"><path d="M0 0H9L4.5 5Z" fill="#595959"/></svg>
<div class="a" style="left:938px;top:21px;width:17px;height:17px;background:#f2f2f2;border:1px solid #c9c9c9"></div>
<svg class="a" style="left:942px;top:27px" width="9" height="5"><path d="M0 0H9L4.5 5Z" fill="#595959"/></svg>
<div class="a" style="left:1002px;top:21px;width:17px;height:17px;background:#f2f2f2;border:1px solid #c9c9c9"></div>
<svg class="a" style="left:1006px;top:27px" width="9" height="5"><path d="M0 0H9L4.5 5Z" fill="#595959"/></svg>
<div class="a" style="left:1066px;top:21px;width:17px;height:17px;background:#f2f2f2;border:1px solid #c9c9c9"></div>
<svg class="a" style="left:1070px;top:27px" width="9" height="5"><path d="M0 0H9L4.5 5Z" fill="#595959"/></svg>
<div class="t" style="left:27px;top:44px;width:61px;text-align:right;font-size:13px;color:#111">4070596</div>
<div class="t" style="left:92px;top:44px;width:61px;overflow:hidden;font-size:13px;color:#111">Aguilar, Ka</div>
<div class="t" style="left:154px;top:44px;width:62px;text-align:right;font-size:13px;color:#111">10</div>
<div class="t" style="left:220px;top:44px;font-size:13px;color:#111">Block 1</div>
<div class="t" style="left:284px;top:44px;font-size:13px;color:#111">9am</div>
<div class="t" style="left:346px;top:44px;width:106px;text-align:right;font-size:13px;color:#111">8/15/2022</div>
<div class="t" style="left:457px;top:44px;font-size:13px;color:#111">World History TX A Sem01 Rm09 22-23 Sec02 8/15</div>
<div class="t" style="left:27px;top:64px;width:61px;text-align:right;font-size:13px;color:#111">4086780</div>
<div class="t" style="left:92px;top:64px;width:61px;overflow:hidden;font-size:13px;color:#111">Alfaro, Ma</div>
<div class="t" style="left:154px;top:64px;width:62px;text-align:right;font-size:13px;color:#111">11</div>
<div class="t" style="left:220px;top:64px;font-size:13px;color:#111">Block 1</div>
<div class="t" style="left:284px;top:64px;font-size:13px;color:#111">9am</div>
<div class="t" style="left:346px;top:64px;width:106px;text-align:right;font-size:13px;color:#111">8/15/2022</div>
<div class="t" style="left:457px;top:64px;font-size:13px;color:#111">World History TX A Sem01 Rm09 22-23 Sec03 8/15</div>
<div class="t" style="left:27px;top:84px;width:61px;text-align:right;font-size:13px;color:#111">2396757</div>
<div class="t" style="left:92px;top:84px;width:61px;overflow:hidden;font-size:13px;color:#111">Almanza, J</div>
<div class="t" style="left:154px;top:84px;width:62px;text-align:right;font-size:13px;color:#111">10</div>
<div class="t" style="left:220px;top:84px;font-size:13px;color:#111">Block 1</div>
<div class="t" style="left:284px;top:84px;font-size:13px;color:#111">9am</div>
<div class="t" style="left:346px;top:84px;width:106px;text-align:right;font-size:13px;color:#111">8/15/2022</div>
<div class="t" style="left:457px;top:84px;font-size:13px;color:#111">World History TX A Sem01 Rm09 22-23 Sec01 8/15</div>
<div class="t" style="left:27px;top:104px;width:61px;text-align:right;font-size:13px;color:#111">4086597</div>
<div class="t" style="left:92px;top:104px;width:61px;overflow:hidden;font-size:13px;color:#111">Alvarado, J</div>
<div class="t" style="left:154px;top:104px;width:62px;text-align:right;font-size:13px;color:#111">10</div>
<div class="t" style="left:220px;top:104px;font-size:13px;color:#111">Block 1</div>
<div class="t" style="left:284px;top:104px;font-size:13px;color:#111">9am</div>
<div class="t" style="left:346px;top:104px;width:106px;text-align:right;font-size:13px;color:#111">8/15/2022</div>
<div class="t" style="left:457px;top:104px;font-size:13px;color:#111">World History TX A Sem01 Rm09 22-23 Sec03 8/15</div>
<div class="t" style="left:27px;top:124px;width:61px;text-align:right;font-size:13px;color:#111">4077036</div>
<div class="t" style="left:92px;top:124px;width:61px;overflow:hidden;font-size:13px;color:#111">Alvarado, J</div>
<div class="t" style="left:154px;top:124px;width:62px;text-align:right;font-size:13px;color:#111">10</div>
<div class="t" style="left:220px;top:124px;font-size:13px;color:#111">Block 1</div>
<div class="t" style="left:284px;top:124px;font-size:13px;color:#111">9am</div>
<div class="t" style="left:346px;top:124px;width:106px;text-align:right;font-size:13px;color:#111">8/15/2022</div>
<div class="t" style="left:457px;top:124px;font-size:13px;color:#111">World History TX A Sem01 Rm09 22-23 Sec03 8/15</div>
<div class="t" style="left:27px;top:144px;width:61px;text-align:right;font-size:13px;color:#111">4072320</div>
<div class="t" style="left:92px;top:144px;width:61px;overflow:hidden;font-size:13px;color:#111">Alvarez Re</div>
<div class="t" style="left:154px;top:144px;width:62px;text-align:right;font-size:13px;color:#111">10</div>
<div class="t" style="left:220px;top:144px;font-size:13px;color:#111">Block 1</div>
<div class="t" style="left:284px;top:144px;font-size:13px;color:#111">9am</div>
<div class="t" style="left:346px;top:144px;width:106px;text-align:right;font-size:13px;color:#111">8/15/2022</div>
<div class="t" style="left:457px;top:144px;font-size:13px;color:#111">World History TX A Sem01 Rm09 22-23 Sec02 8/15</div>
<div class="t" style="left:27px;top:164px;width:61px;text-align:right;font-size:13px;color:#111">4076866</div>
<div class="t" style="left:92px;top:164px;width:61px;overflow:hidden;font-size:13px;color:#111">Arellano, J</div>
<div class="t" style="left:154px;top:164px;width:62px;text-align:right;font-size:13px;color:#111">10</div>
<div class="t" style="left:220px;top:164px;font-size:13px;color:#111">Block 1</div>
<div class="t" style="left:284px;top:164px;font-size:13px;color:#111">9am</div>
<div class="t" style="left:346px;top:164px;width:106px;text-align:right;font-size:13px;color:#111">8/15/2022</div>
<div class="t" style="left:457px;top:164px;font-size:13px;color:#111">World History TX A Sem01 Rm09 22-23 Sec03 8/15</div>
<div class="t" style="left:27px;top:184px;width:61px;text-align:right;font-size:13px;color:#111">4058765</div>
<div class="t" style="left:92px;top:184px;width:61px;overflow:hidden;font-size:13px;color:#111">Arellano, J</div>
<div class="t" style="left:154px;top:184px;width:62px;text-align:right;font-size:13px;color:#111">10</div>
<div class="t" style="left:220px;top:184px;font-size:13px;color:#111">Block 1</div>
<div class="t" style="left:284px;top:184px;font-size:13px;color:#111">9am</div>
<div class="t" style="left:346px;top:184px;width:106px;text-align:right;font-size:13px;color:#111">8/15/2022</div>
<div class="t" style="left:457px;top:184px;font-size:13px;color:#111">World History TX A Sem01 Rm09 22-23 Sec01 8/15</div>
<div class="t" style="left:27px;top:204px;width:61px;text-align:right;font-size:13px;color:#111">4082253</div>
<div class="t" style="left:92px;top:204px;width:61px;overflow:hidden;font-size:13px;color:#111">Ayala, Kim</div>
<div class="t" style="left:154px;top:204px;width:62px;text-align:right;font-size:13px;color:#111">10</div>
<div class="t" style="left:220px;top:204px;font-size:13px;color:#111">Block 1</div>
<div class="t" style="left:284px;top:204px;font-size:13px;color:#111">9am</div>
<div class="t" style="left:346px;top:204px;width:106px;text-align:right;font-size:13px;color:#111">8/15/2022</div>
<div class="t" style="left:457px;top:204px;font-size:13px;color:#111">World History TX A Sem01 Rm09 22-23 Sec03 8/15</div>
<div class="t" style="left:27px;top:224px;width:61px;text-align:right;font-size:13px;color:#111">4062599</div>
<div class="t" style="left:92px;top:224px;width:61px;overflow:hidden;font-size:13px;color:#111">Barron, Dr</div>
<div class="t" style="left:154px;top:224px;width:62px;text-align:right;font-size:13px;color:#111">10</div>
<div class="t" style="left:220px;top:224px;font-size:13px;color:#111">Block 1</div>
<div class="t" style="left:284px;top:224px;font-size:13px;color:#111">9am</div>
<div class="t" style="left:346px;top:224px;width:106px;text-align:right;font-size:13px;color:#111">8/15/2022</div>
<div class="t" style="left:457px;top:224px;font-size:13px;color:#111">World History TX A Sem01 Rm09 22-23 Sec01 8/15</div>
<div class="t" style="left:27px;top:244px;width:61px;text-align:right;font-size:13px;color:#111">4078696</div>
<div class="t" style="left:92px;top:244px;width:61px;overflow:hidden;font-size:13px;color:#111">Bernal, Ad</div>
<div class="t" style="left:154px;top:244px;width:62px;text-align:right;font-size:13px;color:#111">10</div>
<div class="t" style="left:220px;top:244px;font-size:13px;color:#111">Block 1</div>
<div class="t" style="left:284px;top:244px;font-size:13px;color:#111">9am</div>
<div class="t" style="left:346px;top:244px;width:106px;text-align:right;font-size:13px;color:#111">8/15/2022</div>
<div class="t" style="left:457px;top:244px;font-size:13px;color:#111">World History TX A Sem01 Rm09 22-23 Sec03 8/15</div>
<div class="t" style="left:27px;top:264px;width:61px;text-align:right;font-size:13px;color:#111">4058096</div>
<div class="t" style="left:92px;top:264px;width:61px;overflow:hidden;font-size:13px;color:#111">Bessix, Jay</div>
<div class="t" style="left:154px;top:264px;width:62px;text-align:right;font-size:13px;color:#111">10</div>
<div class="t" style="left:220px;top:264px;font-size:13px;color:#111">Block 1</div>
<div class="t" style="left:284px;top:264px;font-size:13px;color:#111">9am</div>
<div class="t" style="left:346px;top:264px;width:106px;text-align:right;font-size:13px;color:#111">8/15/2022</div>
<div class="t" style="left:457px;top:264px;font-size:13px;color:#111">World History TX A Sem01 Rm09 22-23 Sec01 8/15</div>
<div class="t" style="left:27px;top:284px;width:61px;text-align:right;font-size:13px;color:#111">4071802</div>
<div class="t" style="left:92px;top:284px;width:61px;overflow:hidden;font-size:13px;color:#111">Blanco-Oc</div>
<div class="t" style="left:154px;top:284px;width:62px;text-align:right;font-size:13px;color:#111">10</div>
<div class="t" style="left:220px;top:284px;font-size:13px;color:#111">Block 1</div>
<div class="t" style="left:284px;top:284px;font-size:13px;color:#111">9am</div>
<div class="t" style="left:346px;top:284px;width:106px;text-align:right;font-size:13px;color:#111">8/15/2022</div>
<div class="t" style="left:457px;top:284px;font-size:13px;color:#111">World History TX A Sem01 Rm09 22-23 Sec02 8/15</div>
<div class="t" style="left:27px;top:304px;width:61px;text-align:right;font-size:13px;color:#111">4052934</div>
<div class="t" style="left:92px;top:304px;width:61px;overflow:hidden;font-size:13px;color:#111">Brown, MY</div>
<div class="t" style="left:154px;top:304px;width:62px;text-align:right;font-size:13px;color:#111">10</div>
<div class="t" style="left:220px;top:304px;font-size:13px;color:#111">Block 1</div>
<div class="t" style="left:284px;top:304px;font-size:13px;color:#111">9am</div>
<div class="t" style="left:346px;top:304px;width:106px;text-align:right;font-size:13px;color:#111">8/15/2022</div>
<div class="t" style="left:457px;top:304px;font-size:13px;color:#111">World History TX A Sem01 Rm09 22-23 Sec01 8/15</div>
<div class="t" style="left:27px;top:324px;width:61px;text-align:right;font-size:13px;color:#111">4063894</div>
<div class="t" style="left:92px;top:324px;width:61px;overflow:hidden;font-size:13px;color:#111">Bundy, Ch</div>
<div class="t" style="left:154px;top:324px;width:62px;text-align:right;font-size:13px;color:#111">10</div>
<div class="t" style="left:220px;top:324px;font-size:13px;color:#111">Block 1</div>
<div class="t" style="left:284px;top:324px;font-size:13px;color:#111">9am</div>
<div class="t" style="left:346px;top:324px;width:106px;text-align:right;font-size:13px;color:#111">8/15/2022</div>
<div class="t" style="left:457px;top:324px;font-size:13px;color:#111">World History TX A Sem01 Rm09 22-23 Sec01 8/15</div>
<div class="t" style="left:27px;top:344px;width:61px;text-align:right;font-size:13px;color:#111">4068936</div>
<div class="t" style="left:92px;top:344px;width:61px;overflow:hidden;font-size:13px;color:#111">Cantu, Gis</div>
<div class="t" style="left:154px;top:344px;width:62px;text-align:right;font-size:13px;color:#111">10</div>
<div class="t" style="left:220px;top:344px;font-size:13px;color:#111">Block 1</div>
<div class="t" style="left:284px;top:344px;font-size:13px;color:#111">9am</div>
<div class="t" style="left:346px;top:344px;width:106px;text-align:right;font-size:13px;color:#111">8/15/2022</div>
<div class="t" style="left:457px;top:344px;font-size:13px;color:#111">World History TX A Sem01 Rm09 22-23 Sec02 8/15</div>
<div class="t" style="left:27px;top:364px;width:61px;text-align:right;font-size:13px;color:#111">4087588</div>
<div class="t" style="left:92px;top:364px;width:61px;overflow:hidden;font-size:13px;color:#111">Carrington</div>
<div class="t" style="left:154px;top:364px;width:62px;text-align:right;font-size:13px;color:#111">10</div>
<div class="t" style="left:220px;top:364px;font-size:13px;color:#111">Block 1</div>
<div class="t" style="left:284px;top:364px;font-size:13px;color:#111">9am</div>
<div class="t" style="left:346px;top:364px;width:106px;text-align:right;font-size:13px;color:#111">8/15/2022</div>
<div class="t" style="left:457px;top:364px;font-size:13px;color:#111">World History TX A Sem01 Rm09 22-23 Sec03 8/15</div>
<div class="t" style="left:27px;top:384px;width:61px;text-align:right;font-size:13px;color:#111">4086262</div>
<div class="t" style="left:92px;top:384px;width:61px;overflow:hidden;font-size:13px;color:#111">Carson, De</div>
<div class="t" style="left:154px;top:384px;width:62px;text-align:right;font-size:13px;color:#111">9</div>
<div class="t" style="left:220px;top:384px;font-size:13px;color:#111">Block 1</div>
<div class="t" style="left:284px;top:384px;font-size:13px;color:#111">9am</div>
<div class="t" style="left:346px;top:384px;width:106px;text-align:right;font-size:13px;color:#111">8/15/2022</div>
<div class="t" style="left:457px;top:384px;font-size:13px;color:#111">World History TX A Sem01 Rm09 22-23 Sec03 8/15</div>
<div class="t" style="left:27px;top:404px;width:61px;text-align:right;font-size:13px;color:#111">4054801</div>
<div class="t" style="left:92px;top:404px;width:61px;overflow:hidden;font-size:13px;color:#111">Chait, Am</div>
<div class="t" style="left:154px;top:404px;width:62px;text-align:right;font-size:13px;color:#111">10</div>
<div class="t" style="left:220px;top:404px;font-size:13px;color:#111">Block 1</div>
<div class="t" style="left:284px;top:404px;font-size:13px;color:#111">9am</div>
<div class="t" style="left:346px;top:404px;width:106px;text-align:right;font-size:13px;color:#111">8/15/2022</div>
<div class="t" style="left:457px;top:404px;font-size:13px;color:#111">World History TX A Sem01 Rm09 22-23 Sec01 8/15</div>
<div class="t" style="left:27px;top:424px;width:61px;text-align:right;font-size:13px;color:#111">4065159</div>
<div class="t" style="left:92px;top:424px;width:61px;overflow:hidden;font-size:13px;color:#111">Charles, E</div>
<div class="t" style="left:154px;top:424px;width:62px;text-align:right;font-size:13px;color:#111">9</div>
<div class="t" style="left:220px;top:424px;font-size:13px;color:#111">Block 1</div>
<div class="t" style="left:284px;top:424px;font-size:13px;color:#111">9am</div>
<div class="t" style="left:346px;top:424px;width:106px;text-align:right;font-size:13px;color:#111">8/15/2022</div>
<div class="t" style="left:457px;top:424px;font-size:13px;color:#111">World History TX A Sem01 Rm09 22-23 Sec02 8/15</div>
<div class="t" style="left:27px;top:444px;width:61px;text-align:right;font-size:13px;color:#111">4076077</div>
<div class="t" style="left:92px;top:444px;width:61px;overflow:hidden;font-size:13px;color:#111">Cortina, M</div>
<div class="t" style="left:154px;top:444px;width:62px;text-align:right;font-size:13px;color:#111">10</div>
<div class="t" style="left:220px;top:444px;font-size:13px;color:#111">Block 1</div>
<div class="t" style="left:284px;top:444px;font-size:13px;color:#111">9am</div>
<div class="t" style="left:346px;top:444px;width:106px;text-align:right;font-size:13px;color:#111">8/15/2022</div>
<div class="t" style="left:457px;top:444px;font-size:13px;color:#111">World History TX A Sem01 Rm09 22-23 Sec02 8/15</div>
<div class="t" style="left:27px;top:464px;width:61px;text-align:right;font-size:13px;color:#111">4069801</div>
<div class="t" style="left:92px;top:464px;width:61px;overflow:hidden;font-size:13px;color:#111">Cummings</div>
<div class="t" style="left:154px;top:464px;width:62px;text-align:right;font-size:13px;color:#111">10</div>
<div class="t" style="left:220px;top:464px;font-size:13px;color:#111">Block 1</div>
<div class="t" style="left:284px;top:464px;font-size:13px;color:#111">9am</div>
<div class="t" style="left:346px;top:464px;width:106px;text-align:right;font-size:13px;color:#111">8/15/2022</div>
<div class="t" style="left:457px;top:464px;font-size:13px;color:#111">World History TX A Sem01 Rm09 22-23 Sec02 8/15</div>
<div class="t" style="left:27px;top:484px;width:61px;text-align:right;font-size:13px;color:#111">4075569</div>
<div class="t" style="left:92px;top:484px;width:61px;overflow:hidden;font-size:13px;color:#111">De La Cruz</div>
<div class="t" style="left:154px;top:484px;width:62px;text-align:right;font-size:13px;color:#111">10</div>
<div class="t" style="left:220px;top:484px;font-size:13px;color:#111">Block 1</div>
<div class="t" style="left:284px;top:484px;font-size:13px;color:#111">9am</div>
<div class="t" style="left:346px;top:484px;width:106px;text-align:right;font-size:13px;color:#111">8/15/2022</div>
<div class="t" style="left:457px;top:484px;font-size:13px;color:#111">World History TX A Sem01 Rm09 22-23 Sec02 8/15</div>
<div class="t" style="left:27px;top:504px;width:61px;text-align:right;font-size:13px;color:#111">4074011</div>
<div class="t" style="left:92px;top:504px;width:61px;overflow:hidden;font-size:13px;color:#111">De Santiag</div>
<div class="t" style="left:154px;top:504px;width:62px;text-align:right;font-size:13px;color:#111">10</div>
<div class="t" style="left:220px;top:504px;font-size:13px;color:#111">Block 1</div>
<div class="t" style="left:284px;top:504px;font-size:13px;color:#111">9am</div>
<div class="t" style="left:346px;top:504px;width:106px;text-align:right;font-size:13px;color:#111">8/15/2022</div>
<div class="t" style="left:457px;top:504px;font-size:13px;color:#111">World History TX A Sem01 Rm09 22-23 Sec02 8/15</div>
<div class="t" style="left:27px;top:524px;width:61px;text-align:right;font-size:13px;color:#111">4072282</div>
<div class="t" style="left:92px;top:524px;width:61px;overflow:hidden;font-size:13px;color:#111">Dorsey, Ca</div>
<div class="t" style="left:154px;top:524px;width:62px;text-align:right;font-size:13px;color:#111">12</div>
<div class="t" style="left:220px;top:524px;font-size:13px;color:#111">Block 1</div>
<div class="t" style="left:284px;top:524px;font-size:13px;color:#111">9am</div>
<div class="t" style="left:346px;top:524px;width:106px;text-align:right;font-size:13px;color:#111">8/15/2022</div>
<div class="t" style="left:457px;top:524px;font-size:13px;color:#111">World History TX A Sem01 Rm09 22-23 Sec02 8/15</div>
<div class="t" style="left:27px;top:544px;width:61px;text-align:right;font-size:13px;color:#111">4074123</div>
<div class="t" style="left:92px;top:544px;width:61px;overflow:hidden;font-size:13px;color:#111">Dukes, An</div>
<div class="t" style="left:154px;top:544px;width:62px;text-align:right;font-size:13px;color:#111">10</div>
<div class="t" style="left:220px;top:544px;font-size:13px;color:#111">Block 1</div>
<div class="t" style="left:284px;top:544px;font-size:13px;color:#111">9am</div>
<div class="t" style="left:346px;top:544px;width:106px;text-align:right;font-size:13px;color:#111">8/15/2022</div>
<div class="t" style="left:457px;top:544px;font-size:13px;color:#111">World History TX A Sem01 Rm09 22-23 Sec02 8/15</div>
<div class="t" style="left:27px;top:564px;width:61px;text-align:right;font-size:13px;color:#111">4062824</div>
<div class="t" style="left:92px;top:564px;width:61px;overflow:hidden;font-size:13px;color:#111">Duran, Ale</div>
<div class="t" style="left:154px;top:564px;width:62px;text-align:right;font-size:13px;color:#111">10</div>
<div class="t" style="left:220px;top:564px;font-size:13px;color:#111">Block 1</div>
<div class="t" style="left:284px;top:564px;font-size:13px;color:#111">9am</div>
<div class="t" style="left:346px;top:564px;width:106px;text-align:right;font-size:13px;color:#111">8/15/2022</div>
<div class="t" style="left:457px;top:564px;font-size:13px;color:#111">World History TX A Sem01 Rm09 22-23 Sec01 8/15</div>
<div class="t" style="left:27px;top:584px;width:61px;text-align:right;font-size:13px;color:#111">2403894</div>
<div class="t" style="left:92px;top:584px;width:61px;overflow:hidden;font-size:13px;color:#111">Ellison, Sa</div>
<div class="t" style="left:154px;top:584px;width:62px;text-align:right;font-size:13px;color:#111">10</div>
<div class="t" style="left:220px;top:584px;font-size:13px;color:#111">Block 1</div>
<div class="t" style="left:284px;top:584px;font-size:13px;color:#111">9am</div>
<div class="t" style="left:346px;top:584px;width:106px;text-align:right;font-size:13px;color:#111">8/15/2022</div>
<div class="t" style="left:457px;top:584px;font-size:13px;color:#111">World History TX A Sem01 Rm09 22-23 Sec02 8/15</div>
<div class="t" style="left:27px;top:604px;width:61px;text-align:right;font-size:13px;color:#111">4072307</div>
<div class="t" style="left:92px;top:604px;width:61px;overflow:hidden;font-size:13px;color:#111">Flores, Ma</div>
<div class="t" style="left:154px;top:604px;width:62px;text-align:right;font-size:13px;color:#111">10</div>
<div class="t" style="left:220px;top:604px;font-size:13px;color:#111">Block 2</div>
<div class="t" style="left:284px;top:604px;font-size:13px;color:#111">10am</div>
<div class="t" style="left:346px;top:604px;width:106px;text-align:right;font-size:13px;color:#111">8/15/2022</div>
<div class="t" style="left:457px;top:604px;font-size:13px;color:#111">World History TX A Sem01 Rm09 22-23 Sec02 8/15</div>
<div class="t" style="left:27px;top:624px;width:61px;text-align:right;font-size:13px;color:#111">4078347</div>
<div class="t" style="left:92px;top:624px;width:61px;overflow:hidden;font-size:13px;color:#111">Flores-Ric</div>
<div class="t" style="left:154px;top:624px;width:62px;text-align:right;font-size:13px;color:#111">10</div>
<div class="t" style="left:220px;top:624px;font-size:13px;color:#111">Block 2</div>
<div class="t" style="left:284px;top:624px;font-size:13px;color:#111">10am</div>
<div class="t" style="left:346px;top:624px;width:106px;text-align:right;font-size:13px;color:#111">8/15/2022</div>
<div class="t" style="left:457px;top:624px;font-size:13px;color:#111">World History TX A Sem01 Rm09 22-23 Sec03 8/15</div>
</div>
</div>
<div class="a" style="left:769px;top:94px;width:1px;height:891px;background:#7c7c7c"></div>
<div class="a" style="left:769px;top:985px;width:1151px;height:8px;background:linear-gradient(180deg,rgba(0,50,40,.35),rgba(0,60,50,0))"></div>
<div class="a" style="left:0;top:1040px;width:1920px;height:40px;background:#1e3431;border-top:1px solid #0c3a33"></div>
<svg class="a" style="left:16px;top:1052px" width="17" height="17" viewBox="0 0 17 17"><path d="M0 2.5L7 1.5V8H0ZM8 1.3L17 0V8H8ZM0 9H7V15.5L0 14.5ZM8 9H17V17L8 15.7Z" fill="#fff"/></svg>
<svg class="a" style="left:63px;top:1051px" width="18" height="18" viewBox="0 0 18 18"><circle cx="11" cy="7" r="5.5" stroke="#fff" stroke-width="1.4" fill="none"/><path d="M7 11L1.5 16.5" stroke="#fff" stroke-width="1.6"/></svg>
<div class="a" style="left:112px;top:1049px;width:22px;height:22px;background:#f7d21a"><div class="a" style="left:11px;top:11px;width:11px;height:11px;background:linear-gradient(135deg,#3a3020 50%,#e8a020 50%)"></div></div>
<svg class="a" style="left:160px;top:1049px" width="24" height="22" viewBox="0 0 24 22"><path d="M1 3H9L11 5H23V21H1Z" fill="#f2c94c"/><rect x="1" y="7" width="22" height="14" fill="#ffd966"/><path d="M8 13H16V20H14V16H10V20H8Z" fill="#3a8fe0"/></svg>
<svg class="a" style="left:208px;top:1048px" width="30" height="28" viewBox="0 0 30 28"><circle cx="12" cy="12" r="11" fill="#dd4436"/><path d="M12 12L2 18A11 11 0 0 0 17 22Z" fill="#1ea25a"/><path d="M12 12H23A11 11 0 0 1 17 22Z" fill="#f8c632"/><circle cx="12" cy="12" r="5" fill="#fff"/><circle cx="12" cy="12" r="4" fill="#3d7be8"/><circle cx="21" cy="19" r="8" fill="#e73c70"/><text x="17.5" y="23" font-family="Liberation Sans" font-size="10" fill="#fff">c</text></svg>
<div class="a" style="left:200px;top:1077px;width:41px;height:3px;background:#8ab9d9"></div>
<svg class="a" style="left:258px;top:1049px" width="26" height="24" viewBox="0 0 26 24"><ellipse cx="11" cy="9" rx="10" ry="7" fill="#e8dede" transform="rotate(-20 11 9)"/><path d="M4 9L16 6" stroke="#c44" stroke-width="1"/><path d="M12 10L20 22M18 10L14 22" stroke="#2a9ad0" stroke-width="2"/></svg>
<div class="a" style="left:310px;top:1048px;width:18px;height:23px;background:#8e9aab"><div class="a" style="left:2px;top:2px;width:14px;height:4px;background:#6ee0f0"></div><div class="a" style="left:2px;top:8px;width:14px;height:13px;background:repeating-linear-gradient(90deg,#e8eef4 0 3px,transparent 3px 5px)"></div></div>
<svg class="a" style="left:355px;top:1048px" width="26" height="24" viewBox="0 0 26 24"><rect x="8" y="1" width="17" height="22" fill="#28a8ea"/><rect x="8" y="1" width="17" height="7" fill="#50d9ff"/><path d="M8 12L25 22H8Z" fill="#0a64ad"/><rect x="1" y="5" width="14" height="14" rx="1" fill="#0f6cbd"/><circle cx="8" cy="12" r="4" stroke="#fff" stroke-width="2" fill="none"/></svg>
<svg class="a" style="left:403px;top:1048px" width="28" height="26" viewBox="0 0 28 26"><circle cx="18" cy="5" r="4" fill="#7b83eb"/><circle cx="24" cy="8" r="3" fill="#5059c9"/><path d="M10 10H27V18A7 7 0 0 1 14 21Z" fill="#7b83eb"/><rect x="1" y="5" width="15" height="15" rx="1" fill="#4b53bc"/><path d="M4 9H13M8.5 9V17" stroke="#fff" stroke-width="2.2"/><circle cx="22" cy="20" r="5.5" fill="#92c353"/><path d="M19.5 20L21.5 22L24.5 18.5" stroke="#fff" stroke-width="1.5" fill="none"/></svg>
<div class="a" style="left:397px;top:1077px;width:40px;height:3px;background:#8ab9d9"></div>
<svg class="a" style="left:452px;top:1048px" width="26" height="24" viewBox="0 0 26 24"><rect x="8" y="1" width="17" height="22" rx="1" fill="#21a366"/><rect x="8" y="8" width="17" height="8" fill="#107c41"/><rect x="1" y="5" width="14" height="14" rx="1" fill="#185c37"/><path d="M4.5 8.5L11.5 15.5M11.5 8.5L4.5 15.5" stroke="#fff" stroke-width="2"/></svg>
<div class="a" style="left:446px;top:1077px;width:40px;height:3px;background:#8ab9d9"></div>
<div class="a" style="left:491px;top:1040px;width:48px;height:40px;background:#4b5957"></div>
<div class="a" style="left:504px;top:1049px;width:22px;height:20px;border:2px dotted #fff"></div>
<div class="a" style="left:505px;top:1067px;width:20px;height:3px;background:#000"></div>
<div class="a" style="left:491px;top:1077px;width:48px;height:3px;background:#8ab9d9"></div>
<div class="t" style="left:1840px;top:1046px;width:70px;text-align:right;font-size:12px;color:#fff">12:17 PM</div>
<div class="t" style="left:1840px;top:1063px;width:74px;text-align:right;font-size:12px;color:#fff">8/16/2022</div>

</body></html>
